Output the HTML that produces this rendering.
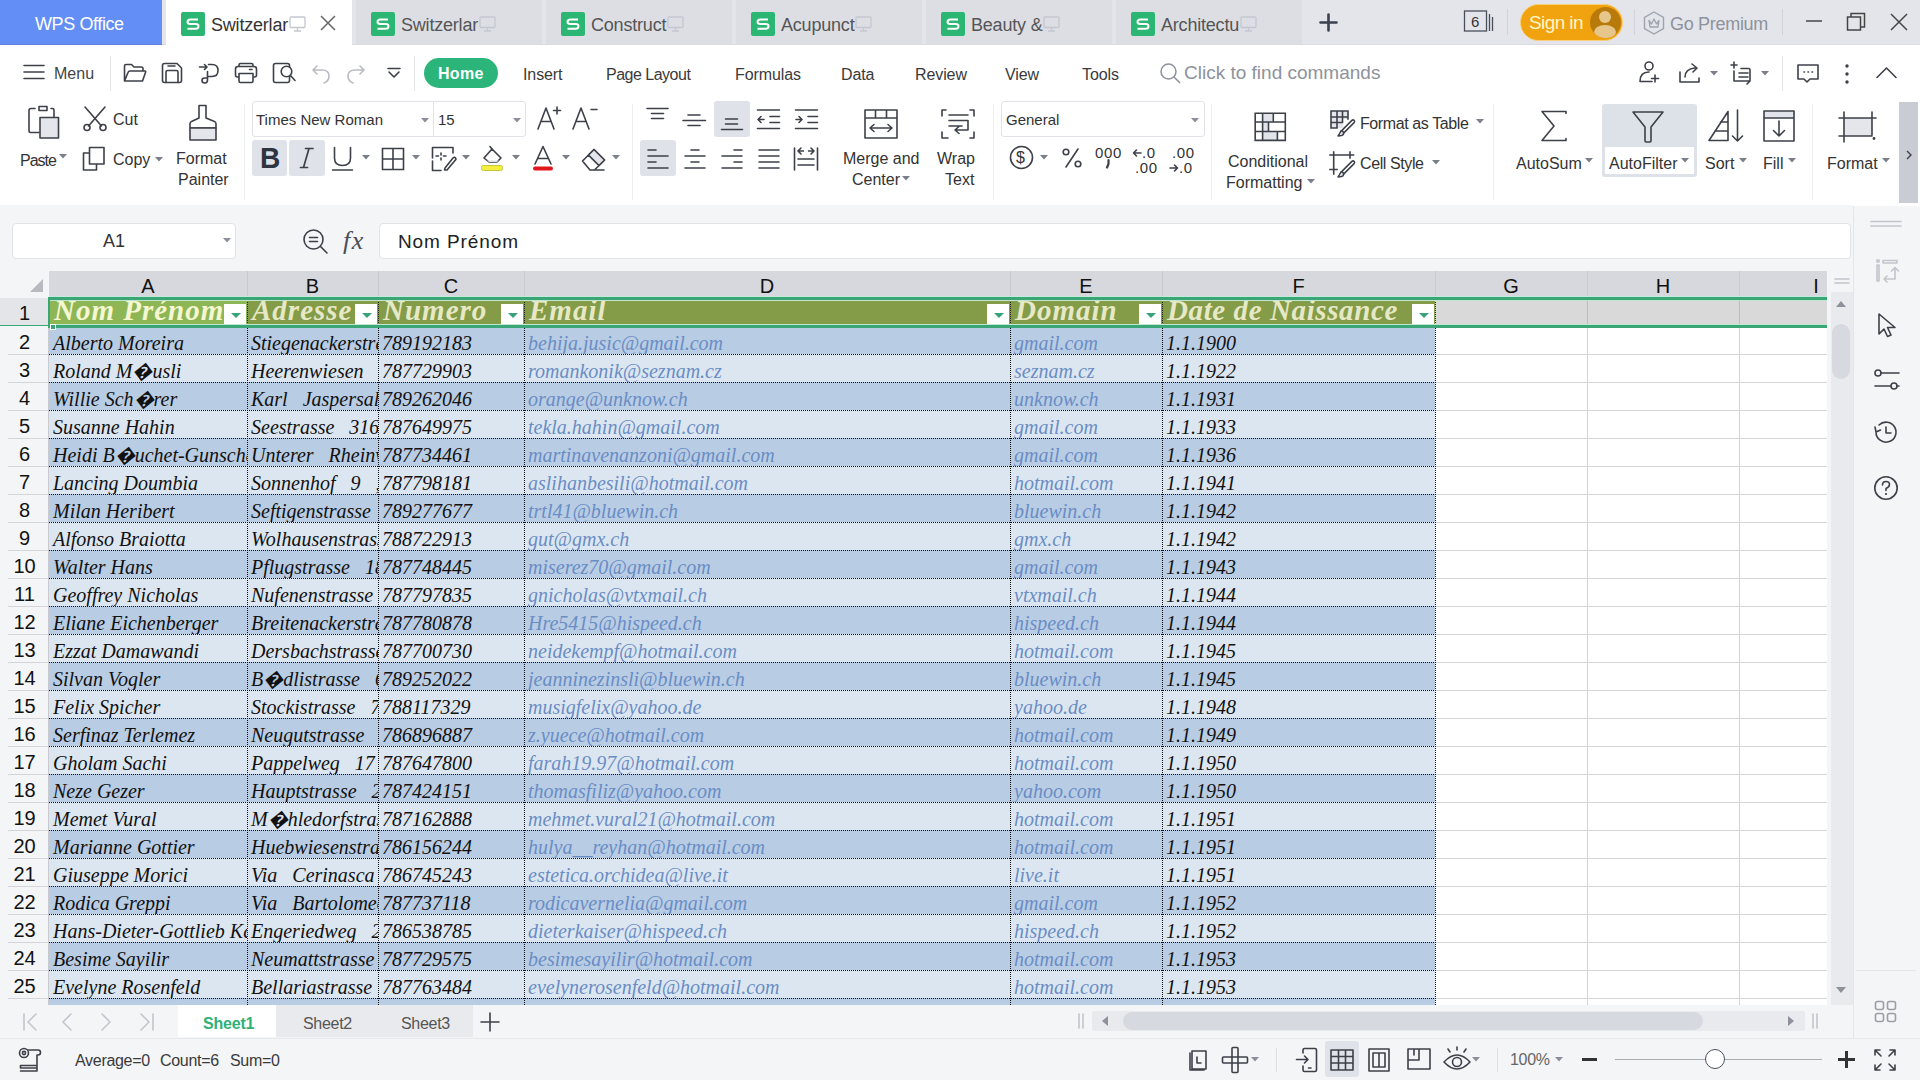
<!DOCTYPE html>
<html><head><meta charset="utf-8"><title>WPS Spreadsheet</title>
<style>
*{margin:0;padding:0;box-sizing:border-box}
html,body{width:1920px;height:1080px;overflow:hidden;background:#fff;font-family:"Liberation Sans",sans-serif;color:#333}
.a{position:absolute}
.t{position:absolute;white-space:nowrap;line-height:1}
svg{position:absolute;overflow:visible}
.ic{fill:none;stroke:#3d4049;stroke-width:1.6;stroke-linecap:round;stroke-linejoin:round}
.cell{position:absolute;overflow:hidden;white-space:nowrap;font-family:"Liberation Serif",serif;font-style:italic}
</style></head><body>

<div class="a" style="left:0;top:0;width:1920px;height:45px;background:#e3e5ea;border-bottom:1px solid #dadce1"></div>
<div class="a" style="left:0;top:0;width:162px;height:45px;background:#628ef6;border-bottom:1px solid #5d82dc"></div>
<div class="t" style="left:35px;top:15px;font-size:18px;color:#fff;letter-spacing:-0.4px">WPS Office</div>
<div class="a" style="left:166px;top:0;width:186px;height:45px;background:#fff"></div>
<div class="a" style="left:181px;top:12px;width:24px;height:24px;background:#2bb673;border-radius:2px"></div>
<svg style="left:181px;top:12px" width="24" height="24" viewBox="0 0 24 24"><path d="M17 7.5H9.5Q6.5 7.5 6.5 10Q6.5 12 9.5 12H14.5Q17.5 12 17.5 14.3Q17.5 16.8 14.5 16.8H6.5" fill="none" stroke="#fff" stroke-width="2"/></svg>
<div class="a" style="left:211px;top:14px;height:22px;display:flex;align-items:flex-start"><span style="font-size:18px;line-height:22px;color:#333;white-space:nowrap;letter-spacing:-0.2px">Switzerlar</span><svg style="position:relative;margin-left:1px;top:2px" width="18" height="17" viewBox="0 0 18 17"><rect x="1" y="1" width="15" height="10.5" rx="1" fill="none" stroke="#c4c7cf" stroke-width="1.3"/><path d="M8.5 11.5v3.5M5 15h7" stroke="#c4c7cf" stroke-width="1.3"/></svg></div>
<div class="a" style="left:356px;top:0;width:186px;height:45px;background:#dcdee4"></div>
<div class="a" style="left:371px;top:12px;width:24px;height:24px;background:#2bb673;border-radius:2px"></div>
<svg style="left:371px;top:12px" width="24" height="24" viewBox="0 0 24 24"><path d="M17 7.5H9.5Q6.5 7.5 6.5 10Q6.5 12 9.5 12H14.5Q17.5 12 17.5 14.3Q17.5 16.8 14.5 16.8H6.5" fill="none" stroke="#fff" stroke-width="2"/></svg>
<div class="a" style="left:401px;top:14px;height:22px;display:flex;align-items:flex-start"><span style="font-size:18px;line-height:22px;color:#555;white-space:nowrap;letter-spacing:-0.2px">Switzerlar</span><svg style="position:relative;margin-left:1px;top:2px" width="18" height="17" viewBox="0 0 18 17"><rect x="1" y="1" width="15" height="10.5" rx="1" fill="none" stroke="#c4c7cf" stroke-width="1.3"/><path d="M8.5 11.5v3.5M5 15h7" stroke="#c4c7cf" stroke-width="1.3"/></svg></div>
<div class="a" style="left:546px;top:0;width:186px;height:45px;background:#dcdee4"></div>
<div class="a" style="left:561px;top:12px;width:24px;height:24px;background:#2bb673;border-radius:2px"></div>
<svg style="left:561px;top:12px" width="24" height="24" viewBox="0 0 24 24"><path d="M17 7.5H9.5Q6.5 7.5 6.5 10Q6.5 12 9.5 12H14.5Q17.5 12 17.5 14.3Q17.5 16.8 14.5 16.8H6.5" fill="none" stroke="#fff" stroke-width="2"/></svg>
<div class="a" style="left:591px;top:14px;height:22px;display:flex;align-items:flex-start"><span style="font-size:18px;line-height:22px;color:#555;white-space:nowrap;letter-spacing:-0.2px">Construct</span><svg style="position:relative;margin-left:1px;top:2px" width="18" height="17" viewBox="0 0 18 17"><rect x="1" y="1" width="15" height="10.5" rx="1" fill="none" stroke="#c4c7cf" stroke-width="1.3"/><path d="M8.5 11.5v3.5M5 15h7" stroke="#c4c7cf" stroke-width="1.3"/></svg></div>
<div class="a" style="left:736px;top:0;width:186px;height:45px;background:#dcdee4"></div>
<div class="a" style="left:751px;top:12px;width:24px;height:24px;background:#2bb673;border-radius:2px"></div>
<svg style="left:751px;top:12px" width="24" height="24" viewBox="0 0 24 24"><path d="M17 7.5H9.5Q6.5 7.5 6.5 10Q6.5 12 9.5 12H14.5Q17.5 12 17.5 14.3Q17.5 16.8 14.5 16.8H6.5" fill="none" stroke="#fff" stroke-width="2"/></svg>
<div class="a" style="left:781px;top:14px;height:22px;display:flex;align-items:flex-start"><span style="font-size:18px;line-height:22px;color:#555;white-space:nowrap;letter-spacing:-0.2px">Acupunct</span><svg style="position:relative;margin-left:1px;top:2px" width="18" height="17" viewBox="0 0 18 17"><rect x="1" y="1" width="15" height="10.5" rx="1" fill="none" stroke="#c4c7cf" stroke-width="1.3"/><path d="M8.5 11.5v3.5M5 15h7" stroke="#c4c7cf" stroke-width="1.3"/></svg></div>
<div class="a" style="left:926px;top:0;width:186px;height:45px;background:#dcdee4"></div>
<div class="a" style="left:941px;top:12px;width:24px;height:24px;background:#2bb673;border-radius:2px"></div>
<svg style="left:941px;top:12px" width="24" height="24" viewBox="0 0 24 24"><path d="M17 7.5H9.5Q6.5 7.5 6.5 10Q6.5 12 9.5 12H14.5Q17.5 12 17.5 14.3Q17.5 16.8 14.5 16.8H6.5" fill="none" stroke="#fff" stroke-width="2"/></svg>
<div class="a" style="left:971px;top:14px;height:22px;display:flex;align-items:flex-start"><span style="font-size:18px;line-height:22px;color:#555;white-space:nowrap;letter-spacing:-0.2px">Beauty &amp;</span><svg style="position:relative;margin-left:1px;top:2px" width="18" height="17" viewBox="0 0 18 17"><rect x="1" y="1" width="15" height="10.5" rx="1" fill="none" stroke="#c4c7cf" stroke-width="1.3"/><path d="M8.5 11.5v3.5M5 15h7" stroke="#c4c7cf" stroke-width="1.3"/></svg></div>
<div class="a" style="left:1116px;top:0;width:186px;height:45px;background:#dcdee4"></div>
<div class="a" style="left:1131px;top:12px;width:24px;height:24px;background:#2bb673;border-radius:2px"></div>
<svg style="left:1131px;top:12px" width="24" height="24" viewBox="0 0 24 24"><path d="M17 7.5H9.5Q6.5 7.5 6.5 10Q6.5 12 9.5 12H14.5Q17.5 12 17.5 14.3Q17.5 16.8 14.5 16.8H6.5" fill="none" stroke="#fff" stroke-width="2"/></svg>
<div class="a" style="left:1161px;top:14px;height:22px;display:flex;align-items:flex-start"><span style="font-size:18px;line-height:22px;color:#555;white-space:nowrap;letter-spacing:-0.2px">Architectu</span><svg style="position:relative;margin-left:1px;top:2px" width="18" height="17" viewBox="0 0 18 17"><rect x="1" y="1" width="15" height="10.5" rx="1" fill="none" stroke="#c4c7cf" stroke-width="1.3"/><path d="M8.5 11.5v3.5M5 15h7" stroke="#c4c7cf" stroke-width="1.3"/></svg></div>
<svg style="left:320px;top:15px" width="16" height="16" viewBox="0 0 16 16"><path d="M1 1L15 15M15 1L1 15" stroke="#666" stroke-width="1.5"/></svg>
<svg style="left:1318px;top:12px" width="21" height="21" viewBox="0 0 21 21"><path d="M10.5 2.5V18.5M2.5 10.5H18.5" stroke="#3a4250" stroke-width="2.6" stroke-linecap="round"/></svg>
<svg style="left:1463px;top:10px" width="34" height="24" viewBox="0 0 34 24"><rect x="1.5" y="1" width="22" height="20" fill="none" stroke="#4a4f5c" stroke-width="1.3"/><path d="M26.5 4v17M29.5 7v14" stroke="#4a4f5c" stroke-width="1.3"/></svg>
<div class="t" style="left:1471px;top:14px;font-size:15px;color:#333">6</div>
<div class="a" style="left:1507px;top:9px;width:1px;height:26px;background:#d0d3d9"></div>
<div class="a" style="left:1520px;top:4px;width:103px;height:37px;background:#f0a20f;border-radius:19px;border:1px solid #f8cf7a"></div>
<div class="t" style="left:1529px;top:13px;font-size:19px;color:#fff6c8;letter-spacing:-0.6px">Sign in</div>
<div class="a" style="left:1590px;top:7px;width:31px;height:31px;background:#b97a0c;border-radius:50%;overflow:hidden"><div class="a" style="left:9px;top:4px;width:12px;height:12px;border-radius:50%;background:#e6c68a"></div><div class="a" style="left:4px;top:18px;width:22px;height:14px;border-radius:50%;background:#e6c68a"></div></div>
<div class="a" style="left:1634px;top:9px;width:1px;height:26px;background:#d0d3d9"></div>
<svg style="left:1643px;top:11px" width="22" height="24" viewBox="0 0 22 24"><path d="M11 1L20.5 6.5V17.5L11 23L1.5 17.5V6.5Z" fill="none" stroke="#9ea3ad" stroke-width="1.4"/><path d="M6 9.5L8.5 13L11 8L13.5 13L16 9.5L15 16H7Z" fill="none" stroke="#9ea3ad" stroke-width="1.3" stroke-linejoin="round"/></svg>
<div class="t" style="left:1670px;top:15px;font-size:18px;color:#8d929c;letter-spacing:-0.3px">Go Premium</div>
<div class="a" style="left:1782px;top:9px;width:1px;height:26px;background:#d0d3d9"></div>
<svg style="left:1805px;top:12px" width="18" height="18" viewBox="0 0 18 18"><path d="M1 9H17" stroke="#444" stroke-width="1.5"/></svg>
<svg style="left:1846px;top:12px" width="20" height="20" viewBox="0 0 20 20"><rect x="1.5" y="5" width="13" height="13" fill="none" stroke="#444" stroke-width="1.5"/><path d="M5 5V1.5H18.5V15H14.5" fill="none" stroke="#444" stroke-width="1.5"/></svg>
<svg style="left:1890px;top:13px" width="18" height="18" viewBox="0 0 18 18"><path d="M1 1L17 17M17 1L1 17" stroke="#444" stroke-width="1.5"/></svg>
<svg style="left:23px;top:64px" width="22" height="16" viewBox="0 0 22 16"><path d="M1 1.5H21M1 8H21M1 14.5H21" stroke="#3d4049" stroke-width="1.6" fill="none" stroke-linecap="round" stroke-linejoin="round"/></svg>
<div class="t" style="left:54px;top:66px;font-size:16px;color:#444">Menu</div>
<div class="a" style="left:110px;top:56px;width:1px;height:35px;background:#e3e5e9"></div>
<svg style="left:123px;top:63px" width="24" height="20" viewBox="0 0 24 20"><path d="M1.5 18V3Q1.5 1.5 3 1.5H8.5L11 4H18.5Q20 4 20 5.5V8M1.5 18L5 9.5Q5.5 8 7 8H22Q23 8 22.5 9.5L19.5 18Z" stroke="#3d4049" stroke-width="1.6" fill="none" stroke-linecap="round" stroke-linejoin="round"/></svg>
<svg style="left:161px;top:62px" width="22" height="22" viewBox="0 0 22 22"><path d="M1.5 3.5Q1.5 1.5 3.5 1.5H16L20.5 6V18.5Q20.5 20.5 18.5 20.5H3.5Q1.5 20.5 1.5 18.5Z M7 4H14 M5 20.5V10Q5 8.5 6.5 8.5H15.5Q17 8.5 17 10V20.5" stroke="#3d4049" stroke-width="1.6" fill="none" stroke-linecap="round" stroke-linejoin="round"/></svg>
<svg style="left:198px;top:62px" width="24" height="24" viewBox="0 0 24 24"><path d="M1.5 5H9M6.5 2.5L9 5L6.5 7.5 M10.5 2.5H14Q20 2.5 20 8.5Q20 14.5 14 14.5H9.5 M9.5 9.5V18Q9.5 21 7 21Q4 21 4 18.5Q4 16 6.5 16H9.5" stroke="#3d4049" stroke-width="1.6" fill="none" stroke-linecap="round" stroke-linejoin="round"/></svg>
<svg style="left:234px;top:62px" width="24" height="22" viewBox="0 0 24 22"><path d="M5 4.5V3Q5 1.5 6.5 1.5H17.5Q19 1.5 19 3V4.5 M4.5 15H3.5Q1.5 15 1.5 13V7Q1.5 4.5 4 4.5H20Q22.5 4.5 22.5 7V13Q22.5 15 20.5 15H19.5 M5 11.5H19V19Q19 20.5 17.5 20.5H6.5Q5 20.5 5 19Z M15.5 7.5H18" stroke="#3d4049" stroke-width="1.6" fill="none" stroke-linecap="round" stroke-linejoin="round"/></svg>
<svg style="left:272px;top:62px" width="26" height="24" viewBox="0 0 26 24"><path d="M1.5 3.5Q1.5 1.5 3.5 1.5H15.5Q17.5 1.5 17.5 3.5V18.5Q17.5 20.5 15.5 20.5H3.5Q1.5 20.5 1.5 18.5Z M18.5 13.5L23 18.5" stroke="#3d4049" stroke-width="1.6" fill="none" stroke-linecap="round" stroke-linejoin="round"/><circle cx="14.5" cy="9.5" r="5.3" fill="#fff" stroke="#3d4049" stroke-width="1.6"/></svg>
<svg style="left:311px;top:63px" width="20" height="22" viewBox="0 0 20 22"><path d="M2 7L6 3M2 7L6 11M2 7H11Q18 7 18 13Q18 18 13 20" stroke="#b9bcc3" stroke-width="1.6" fill="none" stroke-linecap="round" stroke-linejoin="round"/></svg>
<svg style="left:346px;top:63px" width="20" height="22" viewBox="0 0 20 22"><path d="M18 7L14 3M18 7L14 11M18 7H9Q2 7 2 13Q2 18 7 20" stroke="#b9bcc3" stroke-width="1.6" fill="none" stroke-linecap="round" stroke-linejoin="round"/></svg>
<svg style="left:387px;top:67px" width="14" height="12" viewBox="0 0 14 12"><path d="M1 1.5H13M2 5L7 10L12 5" stroke="#3d4049" stroke-width="1.6" fill="none" stroke-linecap="round" stroke-linejoin="round"/></svg>
<div class="a" style="left:414px;top:56px;width:1px;height:35px;background:#e3e5e9"></div>
<div class="a" style="left:424px;top:58px;width:74px;height:30px;background:#2cb57a;border-radius:15px"></div>
<div class="t" style="left:438px;top:66px;font-size:16px;font-weight:bold;color:#fff;letter-spacing:0.3px">Home</div>
<div class="t" style="left:523px;top:67px;font-size:16px;color:#3a3a3a;letter-spacing:-0.1px">Insert</div>
<div class="t" style="left:606px;top:67px;font-size:16px;color:#3a3a3a;letter-spacing:-0.5px">Page Layout</div>
<div class="t" style="left:735px;top:67px;font-size:16px;color:#3a3a3a;letter-spacing:-0.1px">Formulas</div>
<div class="t" style="left:841px;top:67px;font-size:16px;color:#3a3a3a;letter-spacing:-0.1px">Data</div>
<div class="t" style="left:915px;top:67px;font-size:16px;color:#3a3a3a;letter-spacing:-0.1px">Review</div>
<div class="t" style="left:1005px;top:67px;font-size:16px;color:#3a3a3a;letter-spacing:-0.1px">View</div>
<div class="t" style="left:1082px;top:67px;font-size:16px;color:#3a3a3a;letter-spacing:-0.1px">Tools</div>
<svg style="left:1159px;top:62px" width="24" height="24" viewBox="0 0 24 24"><circle cx="9.5" cy="9.5" r="7.5" fill="none" stroke="#8d929c" stroke-width="1.5"/><path d="M15 15L21 21" stroke="#8d929c" stroke-width="1.6"/></svg>
<div class="t" style="left:1184px;top:63px;font-size:19px;color:#8d929c">Click to find commands</div>
<svg style="left:1638px;top:60px" width="24" height="24" viewBox="0 0 24 24"><circle cx="11" cy="6" r="4" stroke="#3d4049" stroke-width="1.6" fill="none" stroke-linecap="round" stroke-linejoin="round"/><path d="M2 21.5Q2 12 11 12 M2 21.5H14 M17 15V22M13.5 18.5H20.5" stroke="#3d4049" stroke-width="1.6" fill="none" stroke-linecap="round" stroke-linejoin="round"/></svg>
<svg style="left:1678px;top:60px" width="26" height="24" viewBox="0 0 26 24"><path d="M2 12V22H21V18 M7 17Q7 9 17 8 M14 4L19 8L15 12" stroke="#3d4049" stroke-width="1.6" fill="none" stroke-linecap="round" stroke-linejoin="round"/></svg>
<svg style="left:1710px;top:71px" width="8" height="5" viewBox="0 0 8 5"><path d="M0 0H8L4 4.5Z" fill="#7a7f8a"/></svg>
<svg style="left:1731px;top:61px" width="26" height="24" viewBox="0 0 26 24"><path d="M3 1V7M0 4H6 M3 10V20H19V9 Q19 7.5 17.5 7.5H10 M8 12H17M8 16H17 M19 20L16 23" stroke="#3d4049" stroke-width="1.6" fill="none" stroke-linecap="round" stroke-linejoin="round"/></svg>
<svg style="left:1761px;top:71px" width="8" height="5" viewBox="0 0 8 5"><path d="M0 0H8L4 4.5Z" fill="#7a7f8a"/></svg>
<div class="a" style="left:1782px;top:56px;width:1px;height:35px;background:#e3e5e9"></div>
<svg style="left:1796px;top:63px" width="24" height="22" viewBox="0 0 24 22"><path d="M2 2H22V16H14L11 19L8 16H2Z M8 9H8.5M12 9H12.5M16 9H16.5" stroke="#3d4049" stroke-width="1.6" fill="none" stroke-linecap="round" stroke-linejoin="round"/></svg>
<svg style="left:1844px;top:63px" width="6" height="22" viewBox="0 0 6 22"><circle cx="3" cy="3" r="1.7" fill="#3d4049"/><circle cx="3" cy="11" r="1.7" fill="#3d4049"/><circle cx="3" cy="19" r="1.7" fill="#3d4049"/></svg>
<svg style="left:1875px;top:66px" width="24" height="14" viewBox="0 0 24 14"><path d="M2 11.5L11.5 2L21 11.5" stroke="#3d4049" stroke-width="1.6" fill="none" stroke-linecap="round" stroke-linejoin="round"/></svg>
<svg style="left:27px;top:104px" width="34" height="36" viewBox="0 0 34 36"><path d="M12 2.5H20V6.5H12Z M8 4.5H4Q2 4.5 2 6.5V27Q2 28.5 3.5 28.5H12 M24 4.5H25.5Q27 4.5 27 6V13" stroke="#3d4049" stroke-width="1.6" fill="none" stroke-linecap="round" stroke-linejoin="round"/><path d="M13 13.5H31.5V34H13Z" fill="#e4e6ec" stroke="#3d4049" stroke-width="1.6" stroke-linejoin="round"/></svg>
<div class="t" style="left:20px;top:153px;font-size:16px;color:#333;letter-spacing:-1px">Paste</div>
<svg style="left:59px;top:154px" width="8" height="5" viewBox="0 0 8 5"><path d="M0 0H8L4 4.5Z" fill="#7a7f8a"/></svg>
<svg style="left:82px;top:106px" width="26" height="26" viewBox="0 0 26 26"><path d="M3 1L19.5 20M23 1L6.5 20" stroke="#3d4049" stroke-width="1.6" fill="none" stroke-linecap="round" stroke-linejoin="round"/><circle cx="5" cy="21.5" r="3" stroke="#3d4049" stroke-width="1.6" fill="none" stroke-linecap="round" stroke-linejoin="round"/><circle cx="21" cy="21.5" r="3" stroke="#3d4049" stroke-width="1.6" fill="none" stroke-linecap="round" stroke-linejoin="round"/></svg>
<div class="t" style="left:113px;top:112px;font-size:16px;color:#333;">Cut</div>
<svg style="left:82px;top:146px" width="26" height="26" viewBox="0 0 26 26"><path d="M7.5 1.5H22V18H7.5Z M7.5 7H1.5V24H14.5V18" stroke="#3d4049" stroke-width="1.6" fill="none" stroke-linecap="round" stroke-linejoin="round"/></svg>
<div class="t" style="left:113px;top:152px;font-size:16px;color:#333;">Copy</div>
<svg style="left:155px;top:157px" width="8" height="5" viewBox="0 0 8 5"><path d="M0 0H8L4 4.5Z" fill="#7a7f8a"/></svg>
<svg style="left:188px;top:104px" width="30" height="38" viewBox="0 0 30 38"><path d="M11 1.5H18V14L26.5 17.5Q28 18 28 20V24H2V20Q2 18 3.5 17.5L11 14Z" stroke="#3d4049" stroke-width="1.6" fill="none" stroke-linecap="round" stroke-linejoin="round"/><path d="M2 24H28V36H2Z" fill="#e4e6ec" stroke="#3d4049" stroke-width="1.6" stroke-linejoin="round"/></svg>
<div class="t" style="left:176px;top:151px;font-size:16px;color:#333;">Format</div>
<div class="t" style="left:178px;top:172px;font-size:16px;color:#333;">Painter</div>
<div class="a" style="left:244px;top:104px;width:1px;height:96px;background:#eceef1"></div>
<div class="a" style="left:252px;top:101px;width:274px;height:36px;border:1px solid #e1e3e8;border-radius:3px;background:#fff"></div>
<div class="a" style="left:433px;top:102px;width:1px;height:34px;background:#e1e3e8"></div>
<div class="t" style="left:256px;top:112px;font-size:15px;color:#333;">Times New Roman</div>
<svg style="left:421px;top:118px" width="8" height="5" viewBox="0 0 8 5"><path d="M0 0H8L4 4.5Z" fill="#8a8f99"/></svg>
<div class="t" style="left:438px;top:112px;font-size:15px;color:#333;">15</div>
<svg style="left:513px;top:118px" width="8" height="5" viewBox="0 0 8 5"><path d="M0 0H8L4 4.5Z" fill="#8a8f99"/></svg>
<svg style="left:537px;top:106px" width="26" height="26" viewBox="0 0 26 26"><path d="M1 23L9 2L17 23 M4 15.5H14 M20 1V8M16.5 4.5H23.5" stroke="#3d4049" stroke-width="1.6" fill="none" stroke-linecap="round" stroke-linejoin="round"/></svg>
<svg style="left:572px;top:106px" width="28" height="26" viewBox="0 0 28 26"><path d="M1 23L9 2L17 23 M4 15.5H14 M19 3.5H25" stroke="#3d4049" stroke-width="1.6" fill="none" stroke-linecap="round" stroke-linejoin="round"/></svg>
<div class="a" style="left:252px;top:140px;width:35px;height:36px;background:#dfe2e8;border-radius:3px"></div>
<div class="a" style="left:289px;top:140px;width:36px;height:36px;background:#dfe2e8;border-radius:3px"></div>
<div class="t" style="left:260px;top:144px;font-size:29px;font-weight:bold;color:#2e3440;transform:scaleX(0.97);transform-origin:left top">B</div>
<svg style="left:298px;top:146px" width="18" height="24" viewBox="0 0 18 24"><path d="M11 2.5L5.5 21.5 M7.5 2.5H15M2.5 21.5H9.5" stroke="#3d4049" stroke-width="1.7" stroke-linecap="round"/></svg>
<svg style="left:331px;top:146px" width="24" height="26" viewBox="0 0 24 26"><path d="M3.5 1.5V12Q3.5 19.5 11.5 19.5Q19.5 19.5 19.5 12V1.5 M1.5 24H21.5" stroke="#3d4049" stroke-width="1.6" fill="none" stroke-linecap="round" stroke-linejoin="round"/></svg>
<svg style="left:362px;top:155px" width="8" height="5" viewBox="0 0 8 5"><path d="M0 0H8L4 4.5Z" fill="#7a7f8a"/></svg>
<svg style="left:381px;top:147px" width="24" height="24" viewBox="0 0 24 24"><path d="M1.5 1.5H22.5V22.5H1.5Z M12 1.5V22.5M1.5 12H22.5" stroke="#3d4049" stroke-width="1.6" fill="none" stroke-linecap="square" stroke-linejoin="miter"/></svg>
<svg style="left:412px;top:155px" width="8" height="5" viewBox="0 0 8 5"><path d="M0 0H8L4 4.5Z" fill="#7a7f8a"/></svg>
<svg style="left:431px;top:146px" width="26" height="26" viewBox="0 0 26 26"><path d="M1.5 12V1.5H22V7 M1.5 15V24.5H10 M5 10H7.5 M10 7V9 M10 12V14 M12.5 10H15 M14 22L22 12Q23.5 10.5 24.5 12Q25.5 13.5 24 14.5L16 24H13.5Z" stroke="#3d4049" stroke-width="1.6" fill="none" stroke-linecap="round" stroke-linejoin="round"/></svg>
<svg style="left:462px;top:155px" width="8" height="5" viewBox="0 0 8 5"><path d="M0 0H8L4 4.5Z" fill="#7a7f8a"/></svg>
<svg style="left:480px;top:145px" width="26" height="28" viewBox="0 0 26 28"><path d="M4 13L12 4L21 13L17 17H9Z" stroke="#3d4049" stroke-width="1.6" fill="none" stroke-linecap="round" stroke-linejoin="round"/><path d="M7 15.5H19L17 17H9Z" fill="#dcdde2"/><path d="M12 4L10 1.5" stroke="#3d4049" stroke-width="1.6" fill="none" stroke-linecap="round" stroke-linejoin="round"/><rect x="1.5" y="20.5" width="21" height="5" rx="2" fill="#f3ef3c" stroke="#c9c43a" stroke-width="1"/></svg>
<svg style="left:512px;top:155px" width="8" height="5" viewBox="0 0 8 5"><path d="M0 0H8L4 4.5Z" fill="#7a7f8a"/></svg>
<svg style="left:532px;top:145px" width="24" height="28" viewBox="0 0 24 28"><path d="M3 19L11 1.5L19 19 M5.5 13.5H16.5" stroke="#3d4049" stroke-width="1.6" fill="none" stroke-linecap="round" stroke-linejoin="round"/><rect x="1" y="21.5" width="20" height="4" rx="2" fill="#e0161d"/></svg>
<svg style="left:562px;top:155px" width="8" height="5" viewBox="0 0 8 5"><path d="M0 0H8L4 4.5Z" fill="#7a7f8a"/></svg>
<svg style="left:581px;top:146px" width="28" height="26" viewBox="0 0 28 26"><path d="M1.5 15L13 3.5L23.5 14L13.5 24H9Z M7.5 9L18 19.5 M10 24H23" stroke="#3d4049" stroke-width="1.6" fill="none" stroke-linecap="round" stroke-linejoin="round"/><path d="M13 3.5L23.5 14L18 19.5L7.5 9Z" fill="#e4e6ec" stroke="#3d4049" stroke-width="1.6" stroke-linejoin="round"/></svg>
<svg style="left:612px;top:155px" width="8" height="5" viewBox="0 0 8 5"><path d="M0 0H8L4 4.5Z" fill="#7a7f8a"/></svg>
<div class="a" style="left:632px;top:104px;width:1px;height:96px;background:#eceef1"></div>
<div class="a" style="left:714px;top:101px;width:36px;height:36px;background:#dfe2e8;border-radius:3px"></div>
<div class="a" style="left:640px;top:140px;width:36px;height:36px;background:#dfe2e8;border-radius:3px"></div>
<svg style="left:646px;top:107px" width="24" height="14" viewBox="0 0 24 14"><path d="M1 1.5H22M5.5 6.5H17.5M5.5 11.5H17.5" stroke="#3d4049" stroke-width="1.6" fill="none" stroke-linecap="round" stroke-linejoin="round"/></svg>
<svg style="left:682px;top:113px" width="26" height="16" viewBox="0 0 26 16"><path d="M6 2H18M1 7.5H23.5M6 12.5H18" stroke="#3d4049" stroke-width="1.6" fill="none" stroke-linecap="round" stroke-linejoin="round"/></svg>
<svg style="left:720px;top:116px" width="24" height="16" viewBox="0 0 24 16"><path d="M5.5 3H17.5M5.5 8H17.5M1.5 13.5H22.5" stroke="#3d4049" stroke-width="1.6" fill="none" stroke-linecap="round" stroke-linejoin="round"/></svg>
<svg style="left:756px;top:108px" width="26" height="24" viewBox="0 0 26 24"><path d="M1.5 2H23.5M14 8.5H23.5M14 14.5H23.5M1.5 20.5H23.5 M8 11.5H2M5 8.5L2 11.5L5 14.5" stroke="#3d4049" stroke-width="1.6" fill="none" stroke-linecap="round" stroke-linejoin="round"/></svg>
<svg style="left:794px;top:108px" width="26" height="24" viewBox="0 0 26 24"><path d="M1.5 2H23.5M14 8.5H23.5M14 14.5H23.5M1.5 20.5H23.5 M2 11.5H8M5 8.5L8 11.5L5 14.5" stroke="#3d4049" stroke-width="1.6" fill="none" stroke-linecap="round" stroke-linejoin="round"/></svg>
<svg style="left:646px;top:147px" width="24" height="24" viewBox="0 0 24 24"><path d="M2 3H10M2 9H22M2 15H10M2 21H22" stroke="#3d4049" stroke-width="1.6" fill="none" stroke-linecap="round" stroke-linejoin="round"/></svg>
<svg style="left:683px;top:147px" width="24" height="24" viewBox="0 0 24 24"><path d="M8 3H16M2 9H22M8 15H16M2 21H22" stroke="#3d4049" stroke-width="1.6" fill="none" stroke-linecap="round" stroke-linejoin="round"/></svg>
<svg style="left:720px;top:147px" width="24" height="24" viewBox="0 0 24 24"><path d="M14 3H22M2 9H22M14 15H22M2 21H22" stroke="#3d4049" stroke-width="1.6" fill="none" stroke-linecap="round" stroke-linejoin="round"/></svg>
<svg style="left:757px;top:147px" width="24" height="24" viewBox="0 0 24 24"><path d="M2 3H22M2 9H22M2 15H22M2 21H22" stroke="#3d4049" stroke-width="1.6" fill="none" stroke-linecap="round" stroke-linejoin="round"/></svg>
<svg style="left:793px;top:146px" width="26" height="26" viewBox="0 0 26 26"><path d="M1.5 2V24M24.5 2V24 M5 13H21M5 19H21 M5 5H21 M5 5L8 2M5 5L8 8M21 5L18 2M21 5L18 8" stroke="#3d4049" stroke-width="1.6" fill="none" stroke-linecap="round" stroke-linejoin="round"/><path d="M11 5H15" stroke="#fff" stroke-width="3"/></svg>
<svg style="left:863px;top:108px" width="36" height="32" viewBox="0 0 36 32"><path d="M2 2H34V30H2Z M2 10H34 M12.5 2V10M23.5 2V10 M7 20H29 M7 20L11 16.5M7 20L11 23.5M29 20L25 16.5M29 20L25 23.5" stroke="#3d4049" stroke-width="1.6" fill="none" stroke-linecap="round" stroke-linejoin="round"/></svg>
<div class="t" style="left:843px;top:151px;font-size:16px;color:#333;">Merge and</div>
<div class="t" style="left:852px;top:172px;font-size:16px;color:#333;">Center</div>
<svg style="left:902px;top:176px" width="8" height="5" viewBox="0 0 8 5"><path d="M0 0H8L4 4.5Z" fill="#7a7f8a"/></svg>
<svg style="left:940px;top:108px" width="36" height="32" viewBox="0 0 36 32"><path d="M6 2H2V8 M30 2H34V8 M2 24V30H8 M34 24V30H30 M9 7H28M9 12.5H28M9 18H22 M28 12.5V22H15 M15 22L19 18.5M15 22L19 25.5" stroke="#3d4049" stroke-width="1.6" fill="none" stroke-linecap="round" stroke-linejoin="round"/></svg>
<div class="t" style="left:937px;top:151px;font-size:16px;color:#333;">Wrap</div>
<div class="t" style="left:945px;top:172px;font-size:16px;color:#333;">Text</div>
<div class="a" style="left:993px;top:104px;width:1px;height:96px;background:#eceef1"></div>
<div class="a" style="left:1001px;top:101px;width:204px;height:36px;border:1px solid #e1e3e8;border-radius:3px;background:#fff"></div>
<div class="t" style="left:1006px;top:112px;font-size:15px;color:#333;">General</div>
<svg style="left:1191px;top:118px" width="8" height="5" viewBox="0 0 8 5"><path d="M0 0H8L4 4.5Z" fill="#8a8f99"/></svg>
<svg style="left:1009px;top:145px" width="26" height="26" viewBox="0 0 26 26"><circle cx="12.5" cy="12.5" r="11" stroke="#3d4049" stroke-width="1.6" fill="none" stroke-linecap="round" stroke-linejoin="round"/></svg>
<div class="t" style="left:1016px;top:150px;font-size:16px;color:#333;">$</div>
<svg style="left:1040px;top:155px" width="8" height="5" viewBox="0 0 8 5"><path d="M0 0H8L4 4.5Z" fill="#7a7f8a"/></svg>
<svg style="left:1061px;top:147px" width="22" height="22" viewBox="0 0 22 22"><path d="M17 2L5 20" stroke="#3d4049" stroke-width="1.6" fill="none" stroke-linecap="round" stroke-linejoin="round"/><circle cx="5" cy="5" r="2.8" stroke="#3d4049" stroke-width="1.6" fill="none" stroke-linecap="round" stroke-linejoin="round"/><circle cx="17" cy="17" r="2.8" stroke="#3d4049" stroke-width="1.6" fill="none" stroke-linecap="round" stroke-linejoin="round"/></svg>
<div class="t" style="left:1095px;top:145px;font-size:15px;color:#333;letter-spacing:0.6px">000</div>
<svg style="left:1105px;top:159px" width="6" height="10" viewBox="0 0 6 10"><path d="M3.5 1V5L2 8.5" stroke="#3d4049" stroke-width="2.2" stroke-linecap="round" fill="none"/></svg>
<svg style="left:1132px;top:148px" width="10" height="10" viewBox="0 0 10 10"><path d="M9 5H1.5M4.5 2L1.5 5L4.5 8" stroke="#3d4049" stroke-width="1.6" fill="none" stroke-linecap="round" stroke-linejoin="round" stroke-width="1.4"/></svg>
<div class="t" style="left:1142px;top:145px;font-size:15px;color:#333;letter-spacing:0.6px">.0</div>
<div class="t" style="left:1135px;top:160px;font-size:15px;color:#333;letter-spacing:0.6px">.00</div>
<div class="t" style="left:1172px;top:145px;font-size:15px;color:#333;letter-spacing:0.6px">.00</div>
<svg style="left:1169px;top:163px" width="10" height="10" viewBox="0 0 10 10"><path d="M1 5H8.5M5.5 2L8.5 5L5.5 8" stroke="#3d4049" stroke-width="1.6" fill="none" stroke-linecap="round" stroke-linejoin="round" stroke-width="1.4"/></svg>
<div class="t" style="left:1179px;top:160px;font-size:15px;color:#333;letter-spacing:0.6px">.0</div>
<div class="a" style="left:1211px;top:104px;width:1px;height:96px;background:#eceef1"></div>
<svg style="left:1253px;top:111px" width="34" height="32" viewBox="0 0 34 32"><path d="M9.6 2.5H20.3V11H9.6Z" fill="#e1e4ea"/><path d="M9.6 11H15.5V20.5H9.6Z" fill="#e1e4ea"/><path d="M9.6 20.5H24.4V29.4H9.6Z" fill="#e1e4ea"/><path d="M2.2 2.2H32.3V29.4H2.2Z M2.2 11H32.3M2.2 20.5H32.3 M9.6 2.2V29.4 M20.3 2.2V11 M15.5 11V20.5 M24.4 20.5V29.4" stroke="#3d4049" stroke-width="1.6" fill="none" stroke-linecap="square" stroke-linejoin="miter"/></svg>
<div class="t" style="left:1228px;top:154px;font-size:16px;color:#333;">Conditional</div>
<div class="t" style="left:1226px;top:175px;font-size:16px;color:#333;">Formatting</div>
<svg style="left:1307px;top:179px" width="8" height="5" viewBox="0 0 8 5"><path d="M0 0H8L4 4.5Z" fill="#7a7f8a"/></svg>
<svg style="left:1329px;top:109px" width="28" height="28" viewBox="0 0 28 28"><path d="M2 2H19V10H14V19H2Z" fill="#e4e6ec"/><path d="M2 2H19V10 M2 2V19H8 M2 8H19 M2 13.5H13 M8 2V19 M13.5 2V13.5" stroke="#3d4049" stroke-width="1.6" fill="none" stroke-linecap="square" stroke-linejoin="miter"/><path d="M24 12.5L13 23.5" stroke="#3d4049" stroke-width="4.6" stroke-linecap="round"/><path d="M24 12.5L13 23.5" stroke="#fff" stroke-width="1.6" stroke-linecap="round"/><path d="M10 25.5L9 27L12.5 26.5Q15 26 14.5 23.5Q14 21.5 12 22Z" fill="#e1e4ea" stroke="#3d4049" stroke-width="1.5" stroke-linejoin="round"/></svg>
<div class="t" style="left:1360px;top:116px;font-size:16px;color:#333;letter-spacing:-0.4px">Format as Table</div>
<svg style="left:1476px;top:119px" width="8" height="5" viewBox="0 0 8 5"><path d="M0 0H8L4 4.5Z" fill="#7a7f8a"/></svg>
<svg style="left:1329px;top:150px" width="28" height="28" viewBox="0 0 28 28"><path d="M4.7 2V24 M1 5H24.5 M21 2V8 M1 19.5H8" stroke="#3d4049" stroke-width="1.6" fill="none" stroke-linecap="square" stroke-linejoin="miter"/><path d="M24 12.5L13 23.5" stroke="#3d4049" stroke-width="4.6" stroke-linecap="round"/><path d="M24 12.5L13 23.5" stroke="#fff" stroke-width="1.6" stroke-linecap="round"/><path d="M10 25.5L9 27L12.5 26.5Q15 26 14.5 23.5Q14 21.5 12 22Z" fill="#e1e4ea" stroke="#3d4049" stroke-width="1.5" stroke-linejoin="round"/></svg>
<div class="t" style="left:1360px;top:156px;font-size:16px;color:#333;letter-spacing:-0.4px">Cell Style</div>
<svg style="left:1432px;top:160px" width="8" height="5" viewBox="0 0 8 5"><path d="M0 0H8L4 4.5Z" fill="#7a7f8a"/></svg>
<div class="a" style="left:1493px;top:104px;width:1px;height:96px;background:#eceef1"></div>
<svg style="left:1540px;top:110px" width="28" height="32" viewBox="0 0 28 32"><path d="M26 3.5V1.5H2L14 16L2 30.5H26V28.5" stroke="#3d4049" stroke-width="1.6" fill="none" stroke-linecap="round" stroke-linejoin="round"/></svg>
<div class="t" style="left:1516px;top:156px;font-size:16px;color:#333;">AutoSum</div>
<svg style="left:1585px;top:158px" width="8" height="5" viewBox="0 0 8 5"><path d="M0 0H8L4 4.5Z" fill="#7a7f8a"/></svg>
<div class="a" style="left:1602px;top:104px;width:95px;height:73px;background:#dde1e8;border-radius:3px"></div>
<div class="a" style="left:1605px;top:147px;width:89px;height:27px;background:#fff"></div>
<svg style="left:1631px;top:110px" width="34" height="34" viewBox="0 0 34 34"><path d="M2 2H32L20 17V31Q20 32 19 32H15Q14 32 14 31V17Z" stroke="#3d4049" stroke-width="1.6" fill="none" stroke-linecap="round" stroke-linejoin="round"/></svg>
<div class="t" style="left:1609px;top:156px;font-size:16px;color:#333;">AutoFilter</div>
<svg style="left:1681px;top:158px" width="8" height="5" viewBox="0 0 8 5"><path d="M0 0H8L4 4.5Z" fill="#7a7f8a"/></svg>
<svg style="left:1707px;top:108px" width="38" height="36" viewBox="0 0 38 36"><path d="M2 32.5L21 3.5V32.5Z M13.5 14H21M8 23H21 M30.5 2V33M25.5 28L30.5 33L35.5 28" stroke="#3d4049" stroke-width="1.6" fill="none" stroke-linecap="round" stroke-linejoin="round"/></svg>
<div class="t" style="left:1705px;top:156px;font-size:16px;color:#333;">Sort</div>
<svg style="left:1739px;top:158px" width="8" height="5" viewBox="0 0 8 5"><path d="M0 0H8L4 4.5Z" fill="#7a7f8a"/></svg>
<svg style="left:1762px;top:109px" width="34" height="34" viewBox="0 0 34 34"><path d="M2 2H32V9H2Z" fill="#e1e4ea"/><path d="M2 2H32V32H2Z M2 9H32 M17 12V27M11.5 21.5L17 27L22.5 21.5" stroke="#3d4049" stroke-width="1.6" fill="none" stroke-linecap="round" stroke-linejoin="round"/></svg>
<div class="t" style="left:1763px;top:156px;font-size:16px;color:#333;">Fill</div>
<svg style="left:1788px;top:158px" width="8" height="5" viewBox="0 0 8 5"><path d="M0 0H8L4 4.5Z" fill="#7a7f8a"/></svg>
<div class="a" style="left:1812px;top:104px;width:1px;height:96px;background:#eceef1"></div>
<svg style="left:1838px;top:110px" width="40" height="34" viewBox="0 0 40 34"><path d="M6 8H34V26H6Z" fill="#e4e6ec"/><path d="M1 8H38 M1 26H34 M6 2V32 M34 2V25" stroke="#3d4049" stroke-width="1.6" fill="none" stroke-linecap="round" stroke-linejoin="round"/><circle cx="36" cy="28.5" r="1.4" fill="#3d4049"/></svg>
<div class="t" style="left:1827px;top:156px;font-size:16px;color:#333;">Format</div>
<svg style="left:1882px;top:158px" width="8" height="5" viewBox="0 0 8 5"><path d="M0 0H8L4 4.5Z" fill="#7a7f8a"/></svg>
<div class="a" style="left:1899px;top:102px;width:19px;height:101px;background:#c9ccd2"></div>
<svg style="left:1905px;top:149px" width="8" height="12" viewBox="0 0 8 12"><path d="M2 2L6 6L2 10" stroke="#3d4049" stroke-width="1.4" fill="none"/></svg>
<div class="a" style="left:0;top:205px;width:1853px;height:5px;background:linear-gradient(#e4e5e8,#f4f5f7)"></div>
<div class="a" style="left:0;top:205px;width:1853px;height:66px;background:#f4f5f7"></div>
<div class="a" style="left:12px;top:223px;width:224px;height:36px;border:1px solid #e1e3e8;border-radius:4px;background:#fff"></div>
<div class="t" style="left:103px;top:232px;font-size:18px;color:#333">A1</div>
<svg style="left:223px;top:238px" width="8" height="5" viewBox="0 0 8 5"><path d="M0 0H8L4 4.5Z" fill="#8a8f99"/></svg>
<svg style="left:302px;top:228px" width="28" height="28" viewBox="0 0 28 28"><circle cx="11.5" cy="11.5" r="9.5" fill="none" stroke="#3d4049" stroke-width="1.6"/><path d="M18.5 18.5L25 25 M7.5 9.5H15.5M7.5 13.5H15.5" stroke="#3d4049" stroke-width="1.6" stroke-linecap="round"/></svg>
<div class="t" style="left:343px;top:228px;font-size:26px;letter-spacing:1.5px;font-family:'Liberation Serif',serif;font-style:italic;color:#4a4e57">fx</div>
<div class="a" style="left:379px;top:223px;width:1472px;height:36px;border:1px solid #e1e3e8;border-radius:4px;background:#fff"></div>
<div class="t" style="left:398px;top:232px;font-size:19px;letter-spacing:0.9px;color:#222">Nom Prénom</div>
<div class="a" style="left:0;top:271px;width:49px;height:26px;background:#f4f5f7"></div>
<svg style="left:29px;top:278px" width="15" height="15" viewBox="0 0 15 15"><path d="M14 1V14H1Z" fill="#b7bac1"/></svg>
<div class="a" style="left:49px;top:271px;width:1778px;height:26px;background:#d6d8de"></div>
<div class="t" style="left:108.0px;width:80px;text-align:center;top:276px;font-size:20px;color:#111">A</div>
<div class="a" style="left:247px;top:271px;width:1px;height:26px;background:#c8cad0"></div>
<div class="t" style="left:272.5px;width:80px;text-align:center;top:276px;font-size:20px;color:#111">B</div>
<div class="a" style="left:378px;top:271px;width:1px;height:26px;background:#c8cad0"></div>
<div class="t" style="left:411.0px;width:80px;text-align:center;top:276px;font-size:20px;color:#111">C</div>
<div class="a" style="left:524px;top:271px;width:1px;height:26px;background:#c8cad0"></div>
<div class="t" style="left:727.0px;width:80px;text-align:center;top:276px;font-size:20px;color:#111">D</div>
<div class="a" style="left:1010px;top:271px;width:1px;height:26px;background:#c8cad0"></div>
<div class="t" style="left:1046.0px;width:80px;text-align:center;top:276px;font-size:20px;color:#111">E</div>
<div class="a" style="left:1162px;top:271px;width:1px;height:26px;background:#c8cad0"></div>
<div class="t" style="left:1258.5px;width:80px;text-align:center;top:276px;font-size:20px;color:#111">F</div>
<div class="a" style="left:1435px;top:271px;width:1px;height:26px;background:#c8cad0"></div>
<div class="t" style="left:1471.0px;width:80px;text-align:center;top:276px;font-size:20px;color:#111">G</div>
<div class="a" style="left:1587px;top:271px;width:1px;height:26px;background:#c8cad0"></div>
<div class="t" style="left:1623.0px;width:80px;text-align:center;top:276px;font-size:20px;color:#111">H</div>
<div class="a" style="left:1739px;top:271px;width:1px;height:26px;background:#c8cad0"></div>
<div class="t" style="left:1776px;width:80px;text-align:center;top:276px;font-size:20px;color:#111">I</div>
<div class="a" style="left:0;top:297px;width:49px;height:708px;background:#f4f5f7"></div>
<div class="a" style="left:0;top:298px;width:49px;height:28px;background:#e4e5e9"></div>
<div class="a" style="left:48px;top:297px;width:1px;height:708px;background:#c8cad0"></div>
<div class="a" style="left:49px;top:297px;width:1778px;height:708px;background:#fff"></div>
<div class="a" style="left:1435px;top:354px;width:392px;height:1px;background:#d4d4d4"></div>
<div class="a" style="left:1435px;top:382px;width:392px;height:1px;background:#d4d4d4"></div>
<div class="a" style="left:1435px;top:410px;width:392px;height:1px;background:#d4d4d4"></div>
<div class="a" style="left:1435px;top:438px;width:392px;height:1px;background:#d4d4d4"></div>
<div class="a" style="left:1435px;top:466px;width:392px;height:1px;background:#d4d4d4"></div>
<div class="a" style="left:1435px;top:494px;width:392px;height:1px;background:#d4d4d4"></div>
<div class="a" style="left:1435px;top:522px;width:392px;height:1px;background:#d4d4d4"></div>
<div class="a" style="left:1435px;top:550px;width:392px;height:1px;background:#d4d4d4"></div>
<div class="a" style="left:1435px;top:578px;width:392px;height:1px;background:#d4d4d4"></div>
<div class="a" style="left:1435px;top:606px;width:392px;height:1px;background:#d4d4d4"></div>
<div class="a" style="left:1435px;top:634px;width:392px;height:1px;background:#d4d4d4"></div>
<div class="a" style="left:1435px;top:662px;width:392px;height:1px;background:#d4d4d4"></div>
<div class="a" style="left:1435px;top:690px;width:392px;height:1px;background:#d4d4d4"></div>
<div class="a" style="left:1435px;top:718px;width:392px;height:1px;background:#d4d4d4"></div>
<div class="a" style="left:1435px;top:746px;width:392px;height:1px;background:#d4d4d4"></div>
<div class="a" style="left:1435px;top:774px;width:392px;height:1px;background:#d4d4d4"></div>
<div class="a" style="left:1435px;top:802px;width:392px;height:1px;background:#d4d4d4"></div>
<div class="a" style="left:1435px;top:830px;width:392px;height:1px;background:#d4d4d4"></div>
<div class="a" style="left:1435px;top:858px;width:392px;height:1px;background:#d4d4d4"></div>
<div class="a" style="left:1435px;top:886px;width:392px;height:1px;background:#d4d4d4"></div>
<div class="a" style="left:1435px;top:914px;width:392px;height:1px;background:#d4d4d4"></div>
<div class="a" style="left:1435px;top:942px;width:392px;height:1px;background:#d4d4d4"></div>
<div class="a" style="left:1435px;top:970px;width:392px;height:1px;background:#d4d4d4"></div>
<div class="a" style="left:1435px;top:998px;width:392px;height:1px;background:#d4d4d4"></div>
<div class="a" style="left:1435px;top:1026px;width:392px;height:1px;background:#d4d4d4"></div>
<div class="a" style="left:1587px;top:297px;width:1px;height:708px;background:#d4d4d4"></div>
<div class="a" style="left:1739px;top:297px;width:1px;height:708px;background:#d4d4d4"></div>
<div class="t" style="left:0;width:49px;text-align:center;top:303px;font-size:20px;color:#111">1</div>
<div class="a" style="left:8px;top:354px;width:40px;height:1px;background:#d3d5d9"></div>
<div class="t" style="left:0;width:49px;text-align:center;top:332px;font-size:20px;color:#111">2</div>
<div class="a" style="left:8px;top:382px;width:40px;height:1px;background:#d3d5d9"></div>
<div class="t" style="left:0;width:49px;text-align:center;top:360px;font-size:20px;color:#111">3</div>
<div class="a" style="left:8px;top:410px;width:40px;height:1px;background:#d3d5d9"></div>
<div class="t" style="left:0;width:49px;text-align:center;top:388px;font-size:20px;color:#111">4</div>
<div class="a" style="left:8px;top:438px;width:40px;height:1px;background:#d3d5d9"></div>
<div class="t" style="left:0;width:49px;text-align:center;top:416px;font-size:20px;color:#111">5</div>
<div class="a" style="left:8px;top:466px;width:40px;height:1px;background:#d3d5d9"></div>
<div class="t" style="left:0;width:49px;text-align:center;top:444px;font-size:20px;color:#111">6</div>
<div class="a" style="left:8px;top:494px;width:40px;height:1px;background:#d3d5d9"></div>
<div class="t" style="left:0;width:49px;text-align:center;top:472px;font-size:20px;color:#111">7</div>
<div class="a" style="left:8px;top:522px;width:40px;height:1px;background:#d3d5d9"></div>
<div class="t" style="left:0;width:49px;text-align:center;top:500px;font-size:20px;color:#111">8</div>
<div class="a" style="left:8px;top:550px;width:40px;height:1px;background:#d3d5d9"></div>
<div class="t" style="left:0;width:49px;text-align:center;top:528px;font-size:20px;color:#111">9</div>
<div class="a" style="left:8px;top:578px;width:40px;height:1px;background:#d3d5d9"></div>
<div class="t" style="left:0;width:49px;text-align:center;top:556px;font-size:20px;color:#111">10</div>
<div class="a" style="left:8px;top:606px;width:40px;height:1px;background:#d3d5d9"></div>
<div class="t" style="left:0;width:49px;text-align:center;top:584px;font-size:20px;color:#111">11</div>
<div class="a" style="left:8px;top:634px;width:40px;height:1px;background:#d3d5d9"></div>
<div class="t" style="left:0;width:49px;text-align:center;top:612px;font-size:20px;color:#111">12</div>
<div class="a" style="left:8px;top:662px;width:40px;height:1px;background:#d3d5d9"></div>
<div class="t" style="left:0;width:49px;text-align:center;top:640px;font-size:20px;color:#111">13</div>
<div class="a" style="left:8px;top:690px;width:40px;height:1px;background:#d3d5d9"></div>
<div class="t" style="left:0;width:49px;text-align:center;top:668px;font-size:20px;color:#111">14</div>
<div class="a" style="left:8px;top:718px;width:40px;height:1px;background:#d3d5d9"></div>
<div class="t" style="left:0;width:49px;text-align:center;top:696px;font-size:20px;color:#111">15</div>
<div class="a" style="left:8px;top:746px;width:40px;height:1px;background:#d3d5d9"></div>
<div class="t" style="left:0;width:49px;text-align:center;top:724px;font-size:20px;color:#111">16</div>
<div class="a" style="left:8px;top:774px;width:40px;height:1px;background:#d3d5d9"></div>
<div class="t" style="left:0;width:49px;text-align:center;top:752px;font-size:20px;color:#111">17</div>
<div class="a" style="left:8px;top:802px;width:40px;height:1px;background:#d3d5d9"></div>
<div class="t" style="left:0;width:49px;text-align:center;top:780px;font-size:20px;color:#111">18</div>
<div class="a" style="left:8px;top:830px;width:40px;height:1px;background:#d3d5d9"></div>
<div class="t" style="left:0;width:49px;text-align:center;top:808px;font-size:20px;color:#111">19</div>
<div class="a" style="left:8px;top:858px;width:40px;height:1px;background:#d3d5d9"></div>
<div class="t" style="left:0;width:49px;text-align:center;top:836px;font-size:20px;color:#111">20</div>
<div class="a" style="left:8px;top:886px;width:40px;height:1px;background:#d3d5d9"></div>
<div class="t" style="left:0;width:49px;text-align:center;top:864px;font-size:20px;color:#111">21</div>
<div class="a" style="left:8px;top:914px;width:40px;height:1px;background:#d3d5d9"></div>
<div class="t" style="left:0;width:49px;text-align:center;top:892px;font-size:20px;color:#111">22</div>
<div class="a" style="left:8px;top:942px;width:40px;height:1px;background:#d3d5d9"></div>
<div class="t" style="left:0;width:49px;text-align:center;top:920px;font-size:20px;color:#111">23</div>
<div class="a" style="left:8px;top:970px;width:40px;height:1px;background:#d3d5d9"></div>
<div class="t" style="left:0;width:49px;text-align:center;top:948px;font-size:20px;color:#111">24</div>
<div class="a" style="left:8px;top:998px;width:40px;height:1px;background:#d3d5d9"></div>
<div class="t" style="left:0;width:49px;text-align:center;top:976px;font-size:20px;color:#111">25</div>
<div class="a" style="left:8px;top:1026px;width:40px;height:1px;background:#d3d5d9"></div>
<div class="a" style="left:49px;top:326px;width:1386px;height:28px;background:#b8cce4"></div>
<div class="cell" style="left:50px;top:326px;width:197px;height:28px;line-height:34px;padding-left:3px;font-size:20px;color:#111">Alberto Moreira</div>
<div class="cell" style="left:248px;top:326px;width:130px;height:28px;line-height:34px;padding-left:3px;font-size:20px;color:#111">Stiegenackerstrasse</div>
<div class="cell" style="left:379px;top:326px;width:145px;height:28px;line-height:34px;padding-left:3px;font-size:20px;color:#111">789192183</div>
<div class="cell" style="left:525px;top:326px;width:485px;height:28px;line-height:34px;padding-left:3px;font-size:20px;color:#6a8dc4">behija.jusic@gmail.com</div>
<div class="cell" style="left:1011px;top:326px;width:151px;height:28px;line-height:34px;padding-left:3px;font-size:20px;color:#6a8dc4">gmail.com</div>
<div class="cell" style="left:1163px;top:326px;width:272px;height:28px;line-height:34px;padding-left:3px;font-size:20px;color:#111">1.1.1900</div>
<div class="a" style="left:49px;top:354px;width:1386px;height:28px;background:#dce6f1"></div>
<div class="cell" style="left:50px;top:354px;width:197px;height:28px;line-height:34px;padding-left:3px;font-size:20px;color:#111">Roland M�usli</div>
<div class="cell" style="left:248px;top:354px;width:130px;height:28px;line-height:34px;padding-left:3px;font-size:20px;color:#111">Heerenwiesen</div>
<div class="cell" style="left:379px;top:354px;width:145px;height:28px;line-height:34px;padding-left:3px;font-size:20px;color:#111">787729903</div>
<div class="cell" style="left:525px;top:354px;width:485px;height:28px;line-height:34px;padding-left:3px;font-size:20px;color:#6a8dc4">romankonik@seznam.cz</div>
<div class="cell" style="left:1011px;top:354px;width:151px;height:28px;line-height:34px;padding-left:3px;font-size:20px;color:#6a8dc4">seznam.cz</div>
<div class="cell" style="left:1163px;top:354px;width:272px;height:28px;line-height:34px;padding-left:3px;font-size:20px;color:#111">1.1.1922</div>
<div class="a" style="left:49px;top:382px;width:1386px;height:28px;background:#b8cce4"></div>
<div class="cell" style="left:50px;top:382px;width:197px;height:28px;line-height:34px;padding-left:3px;font-size:20px;color:#111">Willie Sch�rer</div>
<div class="cell" style="left:248px;top:382px;width:130px;height:28px;line-height:34px;padding-left:3px;font-size:20px;color:#111">Karl&nbsp;&nbsp;&nbsp;Jaspersallee</div>
<div class="cell" style="left:379px;top:382px;width:145px;height:28px;line-height:34px;padding-left:3px;font-size:20px;color:#111">789262046</div>
<div class="cell" style="left:525px;top:382px;width:485px;height:28px;line-height:34px;padding-left:3px;font-size:20px;color:#6a8dc4">orange@unknow.ch</div>
<div class="cell" style="left:1011px;top:382px;width:151px;height:28px;line-height:34px;padding-left:3px;font-size:20px;color:#6a8dc4">unknow.ch</div>
<div class="cell" style="left:1163px;top:382px;width:272px;height:28px;line-height:34px;padding-left:3px;font-size:20px;color:#111">1.1.1931</div>
<div class="a" style="left:49px;top:410px;width:1386px;height:28px;background:#dce6f1"></div>
<div class="cell" style="left:50px;top:410px;width:197px;height:28px;line-height:34px;padding-left:3px;font-size:20px;color:#111">Susanne Hahin</div>
<div class="cell" style="left:248px;top:410px;width:130px;height:28px;line-height:34px;padding-left:3px;font-size:20px;color:#111">Seestrasse&nbsp;&nbsp;&nbsp;316</div>
<div class="cell" style="left:379px;top:410px;width:145px;height:28px;line-height:34px;padding-left:3px;font-size:20px;color:#111">787649975</div>
<div class="cell" style="left:525px;top:410px;width:485px;height:28px;line-height:34px;padding-left:3px;font-size:20px;color:#6a8dc4">tekla.hahin@gmail.com</div>
<div class="cell" style="left:1011px;top:410px;width:151px;height:28px;line-height:34px;padding-left:3px;font-size:20px;color:#6a8dc4">gmail.com</div>
<div class="cell" style="left:1163px;top:410px;width:272px;height:28px;line-height:34px;padding-left:3px;font-size:20px;color:#111">1.1.1933</div>
<div class="a" style="left:49px;top:438px;width:1386px;height:28px;background:#b8cce4"></div>
<div class="cell" style="left:50px;top:438px;width:197px;height:28px;line-height:34px;padding-left:3px;font-size:20px;color:#111">Heidi B�uchet-Gunschen</div>
<div class="cell" style="left:248px;top:438px;width:130px;height:28px;line-height:34px;padding-left:3px;font-size:20px;color:#111">Unterer&nbsp;&nbsp;&nbsp;Rheinweg</div>
<div class="cell" style="left:379px;top:438px;width:145px;height:28px;line-height:34px;padding-left:3px;font-size:20px;color:#111">787734461</div>
<div class="cell" style="left:525px;top:438px;width:485px;height:28px;line-height:34px;padding-left:3px;font-size:20px;color:#6a8dc4">martinavenanzoni@gmail.com</div>
<div class="cell" style="left:1011px;top:438px;width:151px;height:28px;line-height:34px;padding-left:3px;font-size:20px;color:#6a8dc4">gmail.com</div>
<div class="cell" style="left:1163px;top:438px;width:272px;height:28px;line-height:34px;padding-left:3px;font-size:20px;color:#111">1.1.1936</div>
<div class="a" style="left:49px;top:466px;width:1386px;height:28px;background:#dce6f1"></div>
<div class="cell" style="left:50px;top:466px;width:197px;height:28px;line-height:34px;padding-left:3px;font-size:20px;color:#111">Lancing Doumbia</div>
<div class="cell" style="left:248px;top:466px;width:130px;height:28px;line-height:34px;padding-left:3px;font-size:20px;color:#111">Sonnenhof&nbsp;&nbsp;&nbsp;9&nbsp;&nbsp;&nbsp;,</div>
<div class="cell" style="left:379px;top:466px;width:145px;height:28px;line-height:34px;padding-left:3px;font-size:20px;color:#111">787798181</div>
<div class="cell" style="left:525px;top:466px;width:485px;height:28px;line-height:34px;padding-left:3px;font-size:20px;color:#6a8dc4">aslihanbesili@hotmail.com</div>
<div class="cell" style="left:1011px;top:466px;width:151px;height:28px;line-height:34px;padding-left:3px;font-size:20px;color:#6a8dc4">hotmail.com</div>
<div class="cell" style="left:1163px;top:466px;width:272px;height:28px;line-height:34px;padding-left:3px;font-size:20px;color:#111">1.1.1941</div>
<div class="a" style="left:49px;top:494px;width:1386px;height:28px;background:#b8cce4"></div>
<div class="cell" style="left:50px;top:494px;width:197px;height:28px;line-height:34px;padding-left:3px;font-size:20px;color:#111">Milan Heribert</div>
<div class="cell" style="left:248px;top:494px;width:130px;height:28px;line-height:34px;padding-left:3px;font-size:20px;color:#111">Seftigenstrasse</div>
<div class="cell" style="left:379px;top:494px;width:145px;height:28px;line-height:34px;padding-left:3px;font-size:20px;color:#111">789277677</div>
<div class="cell" style="left:525px;top:494px;width:485px;height:28px;line-height:34px;padding-left:3px;font-size:20px;color:#6a8dc4">trtl41@bluewin.ch</div>
<div class="cell" style="left:1011px;top:494px;width:151px;height:28px;line-height:34px;padding-left:3px;font-size:20px;color:#6a8dc4">bluewin.ch</div>
<div class="cell" style="left:1163px;top:494px;width:272px;height:28px;line-height:34px;padding-left:3px;font-size:20px;color:#111">1.1.1942</div>
<div class="a" style="left:49px;top:522px;width:1386px;height:28px;background:#dce6f1"></div>
<div class="cell" style="left:50px;top:522px;width:197px;height:28px;line-height:34px;padding-left:3px;font-size:20px;color:#111">Alfonso Braiotta</div>
<div class="cell" style="left:248px;top:522px;width:130px;height:28px;line-height:34px;padding-left:3px;font-size:20px;color:#111">Wolhausenstrasse</div>
<div class="cell" style="left:379px;top:522px;width:145px;height:28px;line-height:34px;padding-left:3px;font-size:20px;color:#111">788722913</div>
<div class="cell" style="left:525px;top:522px;width:485px;height:28px;line-height:34px;padding-left:3px;font-size:20px;color:#6a8dc4">gut@gmx.ch</div>
<div class="cell" style="left:1011px;top:522px;width:151px;height:28px;line-height:34px;padding-left:3px;font-size:20px;color:#6a8dc4">gmx.ch</div>
<div class="cell" style="left:1163px;top:522px;width:272px;height:28px;line-height:34px;padding-left:3px;font-size:20px;color:#111">1.1.1942</div>
<div class="a" style="left:49px;top:550px;width:1386px;height:28px;background:#b8cce4"></div>
<div class="cell" style="left:50px;top:550px;width:197px;height:28px;line-height:34px;padding-left:3px;font-size:20px;color:#111">Walter Hans</div>
<div class="cell" style="left:248px;top:550px;width:130px;height:28px;line-height:34px;padding-left:3px;font-size:20px;color:#111">Pflugstrasse&nbsp;&nbsp;&nbsp;18</div>
<div class="cell" style="left:379px;top:550px;width:145px;height:28px;line-height:34px;padding-left:3px;font-size:20px;color:#111">787748445</div>
<div class="cell" style="left:525px;top:550px;width:485px;height:28px;line-height:34px;padding-left:3px;font-size:20px;color:#6a8dc4">miserez70@gmail.com</div>
<div class="cell" style="left:1011px;top:550px;width:151px;height:28px;line-height:34px;padding-left:3px;font-size:20px;color:#6a8dc4">gmail.com</div>
<div class="cell" style="left:1163px;top:550px;width:272px;height:28px;line-height:34px;padding-left:3px;font-size:20px;color:#111">1.1.1943</div>
<div class="a" style="left:49px;top:578px;width:1386px;height:28px;background:#dce6f1"></div>
<div class="cell" style="left:50px;top:578px;width:197px;height:28px;line-height:34px;padding-left:3px;font-size:20px;color:#111">Geoffrey Nicholas</div>
<div class="cell" style="left:248px;top:578px;width:130px;height:28px;line-height:34px;padding-left:3px;font-size:20px;color:#111">Nufenenstrasse</div>
<div class="cell" style="left:379px;top:578px;width:145px;height:28px;line-height:34px;padding-left:3px;font-size:20px;color:#111">787797835</div>
<div class="cell" style="left:525px;top:578px;width:485px;height:28px;line-height:34px;padding-left:3px;font-size:20px;color:#6a8dc4">gnicholas@vtxmail.ch</div>
<div class="cell" style="left:1011px;top:578px;width:151px;height:28px;line-height:34px;padding-left:3px;font-size:20px;color:#6a8dc4">vtxmail.ch</div>
<div class="cell" style="left:1163px;top:578px;width:272px;height:28px;line-height:34px;padding-left:3px;font-size:20px;color:#111">1.1.1944</div>
<div class="a" style="left:49px;top:606px;width:1386px;height:28px;background:#b8cce4"></div>
<div class="cell" style="left:50px;top:606px;width:197px;height:28px;line-height:34px;padding-left:3px;font-size:20px;color:#111">Eliane Eichenberger</div>
<div class="cell" style="left:248px;top:606px;width:130px;height:28px;line-height:34px;padding-left:3px;font-size:20px;color:#111">Breitenackerstrasse</div>
<div class="cell" style="left:379px;top:606px;width:145px;height:28px;line-height:34px;padding-left:3px;font-size:20px;color:#111">787780878</div>
<div class="cell" style="left:525px;top:606px;width:485px;height:28px;line-height:34px;padding-left:3px;font-size:20px;color:#6a8dc4">Hre5415@hispeed.ch</div>
<div class="cell" style="left:1011px;top:606px;width:151px;height:28px;line-height:34px;padding-left:3px;font-size:20px;color:#6a8dc4">hispeed.ch</div>
<div class="cell" style="left:1163px;top:606px;width:272px;height:28px;line-height:34px;padding-left:3px;font-size:20px;color:#111">1.1.1944</div>
<div class="a" style="left:49px;top:634px;width:1386px;height:28px;background:#dce6f1"></div>
<div class="cell" style="left:50px;top:634px;width:197px;height:28px;line-height:34px;padding-left:3px;font-size:20px;color:#111">Ezzat Damawandi</div>
<div class="cell" style="left:248px;top:634px;width:130px;height:28px;line-height:34px;padding-left:3px;font-size:20px;color:#111">Dersbachstrasse</div>
<div class="cell" style="left:379px;top:634px;width:145px;height:28px;line-height:34px;padding-left:3px;font-size:20px;color:#111">787700730</div>
<div class="cell" style="left:525px;top:634px;width:485px;height:28px;line-height:34px;padding-left:3px;font-size:20px;color:#6a8dc4">neidekempf@hotmail.com</div>
<div class="cell" style="left:1011px;top:634px;width:151px;height:28px;line-height:34px;padding-left:3px;font-size:20px;color:#6a8dc4">hotmail.com</div>
<div class="cell" style="left:1163px;top:634px;width:272px;height:28px;line-height:34px;padding-left:3px;font-size:20px;color:#111">1.1.1945</div>
<div class="a" style="left:49px;top:662px;width:1386px;height:28px;background:#b8cce4"></div>
<div class="cell" style="left:50px;top:662px;width:197px;height:28px;line-height:34px;padding-left:3px;font-size:20px;color:#111">Silvan Vogler</div>
<div class="cell" style="left:248px;top:662px;width:130px;height:28px;line-height:34px;padding-left:3px;font-size:20px;color:#111">B�dlistrasse&nbsp;&nbsp;&nbsp;6</div>
<div class="cell" style="left:379px;top:662px;width:145px;height:28px;line-height:34px;padding-left:3px;font-size:20px;color:#111">789252022</div>
<div class="cell" style="left:525px;top:662px;width:485px;height:28px;line-height:34px;padding-left:3px;font-size:20px;color:#6a8dc4">jeanninezinsli@bluewin.ch</div>
<div class="cell" style="left:1011px;top:662px;width:151px;height:28px;line-height:34px;padding-left:3px;font-size:20px;color:#6a8dc4">bluewin.ch</div>
<div class="cell" style="left:1163px;top:662px;width:272px;height:28px;line-height:34px;padding-left:3px;font-size:20px;color:#111">1.1.1945</div>
<div class="a" style="left:49px;top:690px;width:1386px;height:28px;background:#dce6f1"></div>
<div class="cell" style="left:50px;top:690px;width:197px;height:28px;line-height:34px;padding-left:3px;font-size:20px;color:#111">Felix Spicher</div>
<div class="cell" style="left:248px;top:690px;width:130px;height:28px;line-height:34px;padding-left:3px;font-size:20px;color:#111">Stockistrasse&nbsp;&nbsp;&nbsp;7</div>
<div class="cell" style="left:379px;top:690px;width:145px;height:28px;line-height:34px;padding-left:3px;font-size:20px;color:#111">788117329</div>
<div class="cell" style="left:525px;top:690px;width:485px;height:28px;line-height:34px;padding-left:3px;font-size:20px;color:#6a8dc4">musigfelix@yahoo.de</div>
<div class="cell" style="left:1011px;top:690px;width:151px;height:28px;line-height:34px;padding-left:3px;font-size:20px;color:#6a8dc4">yahoo.de</div>
<div class="cell" style="left:1163px;top:690px;width:272px;height:28px;line-height:34px;padding-left:3px;font-size:20px;color:#111">1.1.1948</div>
<div class="a" style="left:49px;top:718px;width:1386px;height:28px;background:#b8cce4"></div>
<div class="cell" style="left:50px;top:718px;width:197px;height:28px;line-height:34px;padding-left:3px;font-size:20px;color:#111">Serfinaz Terlemez</div>
<div class="cell" style="left:248px;top:718px;width:130px;height:28px;line-height:34px;padding-left:3px;font-size:20px;color:#111">Neugutstrasse&nbsp;&nbsp;&nbsp;1</div>
<div class="cell" style="left:379px;top:718px;width:145px;height:28px;line-height:34px;padding-left:3px;font-size:20px;color:#111">786896887</div>
<div class="cell" style="left:525px;top:718px;width:485px;height:28px;line-height:34px;padding-left:3px;font-size:20px;color:#6a8dc4">z.yuece@hotmail.com</div>
<div class="cell" style="left:1011px;top:718px;width:151px;height:28px;line-height:34px;padding-left:3px;font-size:20px;color:#6a8dc4">hotmail.com</div>
<div class="cell" style="left:1163px;top:718px;width:272px;height:28px;line-height:34px;padding-left:3px;font-size:20px;color:#111">1.1.1949</div>
<div class="a" style="left:49px;top:746px;width:1386px;height:28px;background:#dce6f1"></div>
<div class="cell" style="left:50px;top:746px;width:197px;height:28px;line-height:34px;padding-left:3px;font-size:20px;color:#111">Gholam Sachi</div>
<div class="cell" style="left:248px;top:746px;width:130px;height:28px;line-height:34px;padding-left:3px;font-size:20px;color:#111">Pappelweg&nbsp;&nbsp;&nbsp;17</div>
<div class="cell" style="left:379px;top:746px;width:145px;height:28px;line-height:34px;padding-left:3px;font-size:20px;color:#111">787647800</div>
<div class="cell" style="left:525px;top:746px;width:485px;height:28px;line-height:34px;padding-left:3px;font-size:20px;color:#6a8dc4">farah19.97@hotmail.com</div>
<div class="cell" style="left:1011px;top:746px;width:151px;height:28px;line-height:34px;padding-left:3px;font-size:20px;color:#6a8dc4">hotmail.com</div>
<div class="cell" style="left:1163px;top:746px;width:272px;height:28px;line-height:34px;padding-left:3px;font-size:20px;color:#111">1.1.1950</div>
<div class="a" style="left:49px;top:774px;width:1386px;height:28px;background:#b8cce4"></div>
<div class="cell" style="left:50px;top:774px;width:197px;height:28px;line-height:34px;padding-left:3px;font-size:20px;color:#111">Neze Gezer</div>
<div class="cell" style="left:248px;top:774px;width:130px;height:28px;line-height:34px;padding-left:3px;font-size:20px;color:#111">Hauptstrasse&nbsp;&nbsp;&nbsp;2</div>
<div class="cell" style="left:379px;top:774px;width:145px;height:28px;line-height:34px;padding-left:3px;font-size:20px;color:#111">787424151</div>
<div class="cell" style="left:525px;top:774px;width:485px;height:28px;line-height:34px;padding-left:3px;font-size:20px;color:#6a8dc4">thomasfiliz@yahoo.com</div>
<div class="cell" style="left:1011px;top:774px;width:151px;height:28px;line-height:34px;padding-left:3px;font-size:20px;color:#6a8dc4">yahoo.com</div>
<div class="cell" style="left:1163px;top:774px;width:272px;height:28px;line-height:34px;padding-left:3px;font-size:20px;color:#111">1.1.1950</div>
<div class="a" style="left:49px;top:802px;width:1386px;height:28px;background:#dce6f1"></div>
<div class="cell" style="left:50px;top:802px;width:197px;height:28px;line-height:34px;padding-left:3px;font-size:20px;color:#111">Memet Vural</div>
<div class="cell" style="left:248px;top:802px;width:130px;height:28px;line-height:34px;padding-left:3px;font-size:20px;color:#111">M�hledorfstrasse</div>
<div class="cell" style="left:379px;top:802px;width:145px;height:28px;line-height:34px;padding-left:3px;font-size:20px;color:#111">787162888</div>
<div class="cell" style="left:525px;top:802px;width:485px;height:28px;line-height:34px;padding-left:3px;font-size:20px;color:#6a8dc4">mehmet.vural21@hotmail.com</div>
<div class="cell" style="left:1011px;top:802px;width:151px;height:28px;line-height:34px;padding-left:3px;font-size:20px;color:#6a8dc4">hotmail.com</div>
<div class="cell" style="left:1163px;top:802px;width:272px;height:28px;line-height:34px;padding-left:3px;font-size:20px;color:#111">1.1.1951</div>
<div class="a" style="left:49px;top:830px;width:1386px;height:28px;background:#b8cce4"></div>
<div class="cell" style="left:50px;top:830px;width:197px;height:28px;line-height:34px;padding-left:3px;font-size:20px;color:#111">Marianne Gottier</div>
<div class="cell" style="left:248px;top:830px;width:130px;height:28px;line-height:34px;padding-left:3px;font-size:20px;color:#111">Huebwiesenstrasse</div>
<div class="cell" style="left:379px;top:830px;width:145px;height:28px;line-height:34px;padding-left:3px;font-size:20px;color:#111">786156244</div>
<div class="cell" style="left:525px;top:830px;width:485px;height:28px;line-height:34px;padding-left:3px;font-size:20px;color:#6a8dc4">hulya__reyhan@hotmail.com</div>
<div class="cell" style="left:1011px;top:830px;width:151px;height:28px;line-height:34px;padding-left:3px;font-size:20px;color:#6a8dc4">hotmail.com</div>
<div class="cell" style="left:1163px;top:830px;width:272px;height:28px;line-height:34px;padding-left:3px;font-size:20px;color:#111">1.1.1951</div>
<div class="a" style="left:49px;top:858px;width:1386px;height:28px;background:#dce6f1"></div>
<div class="cell" style="left:50px;top:858px;width:197px;height:28px;line-height:34px;padding-left:3px;font-size:20px;color:#111">Giuseppe Morici</div>
<div class="cell" style="left:248px;top:858px;width:130px;height:28px;line-height:34px;padding-left:3px;font-size:20px;color:#111">Via&nbsp;&nbsp;&nbsp;Cerinasca</div>
<div class="cell" style="left:379px;top:858px;width:145px;height:28px;line-height:34px;padding-left:3px;font-size:20px;color:#111">786745243</div>
<div class="cell" style="left:525px;top:858px;width:485px;height:28px;line-height:34px;padding-left:3px;font-size:20px;color:#6a8dc4">estetica.orchidea@live.it</div>
<div class="cell" style="left:1011px;top:858px;width:151px;height:28px;line-height:34px;padding-left:3px;font-size:20px;color:#6a8dc4">live.it</div>
<div class="cell" style="left:1163px;top:858px;width:272px;height:28px;line-height:34px;padding-left:3px;font-size:20px;color:#111">1.1.1951</div>
<div class="a" style="left:49px;top:886px;width:1386px;height:28px;background:#b8cce4"></div>
<div class="cell" style="left:50px;top:886px;width:197px;height:28px;line-height:34px;padding-left:3px;font-size:20px;color:#111">Rodica Greppi</div>
<div class="cell" style="left:248px;top:886px;width:130px;height:28px;line-height:34px;padding-left:3px;font-size:20px;color:#111">Via&nbsp;&nbsp;&nbsp;Bartolomeo</div>
<div class="cell" style="left:379px;top:886px;width:145px;height:28px;line-height:34px;padding-left:3px;font-size:20px;color:#111">787737118</div>
<div class="cell" style="left:525px;top:886px;width:485px;height:28px;line-height:34px;padding-left:3px;font-size:20px;color:#6a8dc4">rodicavernelia@gmail.com</div>
<div class="cell" style="left:1011px;top:886px;width:151px;height:28px;line-height:34px;padding-left:3px;font-size:20px;color:#6a8dc4">gmail.com</div>
<div class="cell" style="left:1163px;top:886px;width:272px;height:28px;line-height:34px;padding-left:3px;font-size:20px;color:#111">1.1.1952</div>
<div class="a" style="left:49px;top:914px;width:1386px;height:28px;background:#dce6f1"></div>
<div class="cell" style="left:50px;top:914px;width:197px;height:28px;line-height:34px;padding-left:3px;font-size:20px;color:#111">Hans-Dieter-Gottlieb Kaiser</div>
<div class="cell" style="left:248px;top:914px;width:130px;height:28px;line-height:34px;padding-left:3px;font-size:20px;color:#111">Engeriedweg&nbsp;&nbsp;&nbsp;2</div>
<div class="cell" style="left:379px;top:914px;width:145px;height:28px;line-height:34px;padding-left:3px;font-size:20px;color:#111">786538785</div>
<div class="cell" style="left:525px;top:914px;width:485px;height:28px;line-height:34px;padding-left:3px;font-size:20px;color:#6a8dc4">dieterkaiser@hispeed.ch</div>
<div class="cell" style="left:1011px;top:914px;width:151px;height:28px;line-height:34px;padding-left:3px;font-size:20px;color:#6a8dc4">hispeed.ch</div>
<div class="cell" style="left:1163px;top:914px;width:272px;height:28px;line-height:34px;padding-left:3px;font-size:20px;color:#111">1.1.1952</div>
<div class="a" style="left:49px;top:942px;width:1386px;height:28px;background:#b8cce4"></div>
<div class="cell" style="left:50px;top:942px;width:197px;height:28px;line-height:34px;padding-left:3px;font-size:20px;color:#111">Besime Sayilir</div>
<div class="cell" style="left:248px;top:942px;width:130px;height:28px;line-height:34px;padding-left:3px;font-size:20px;color:#111">Neumattstrasse</div>
<div class="cell" style="left:379px;top:942px;width:145px;height:28px;line-height:34px;padding-left:3px;font-size:20px;color:#111">787729575</div>
<div class="cell" style="left:525px;top:942px;width:485px;height:28px;line-height:34px;padding-left:3px;font-size:20px;color:#6a8dc4">besimesayilir@hotmail.com</div>
<div class="cell" style="left:1011px;top:942px;width:151px;height:28px;line-height:34px;padding-left:3px;font-size:20px;color:#6a8dc4">hotmail.com</div>
<div class="cell" style="left:1163px;top:942px;width:272px;height:28px;line-height:34px;padding-left:3px;font-size:20px;color:#111">1.1.1953</div>
<div class="a" style="left:49px;top:970px;width:1386px;height:28px;background:#dce6f1"></div>
<div class="cell" style="left:50px;top:970px;width:197px;height:28px;line-height:34px;padding-left:3px;font-size:20px;color:#111">Evelyne Rosenfeld</div>
<div class="cell" style="left:248px;top:970px;width:130px;height:28px;line-height:34px;padding-left:3px;font-size:20px;color:#111">Bellariastrasse</div>
<div class="cell" style="left:379px;top:970px;width:145px;height:28px;line-height:34px;padding-left:3px;font-size:20px;color:#111">787763484</div>
<div class="cell" style="left:525px;top:970px;width:485px;height:28px;line-height:34px;padding-left:3px;font-size:20px;color:#6a8dc4">evelynerosenfeld@hotmail.com</div>
<div class="cell" style="left:1011px;top:970px;width:151px;height:28px;line-height:34px;padding-left:3px;font-size:20px;color:#6a8dc4">hotmail.com</div>
<div class="cell" style="left:1163px;top:970px;width:272px;height:28px;line-height:34px;padding-left:3px;font-size:20px;color:#111">1.1.1953</div>
<div class="a" style="left:49px;top:998px;width:1386px;height:7px;background:#b8cce4"></div>
<div class="a" style="left:49px;top:354px;width:1386px;height:1px;background:repeating-linear-gradient(90deg,#111 0 1px,transparent 1px 2px)"></div>
<div class="a" style="left:49px;top:382px;width:1386px;height:1px;background:repeating-linear-gradient(90deg,#111 0 1px,transparent 1px 2px)"></div>
<div class="a" style="left:49px;top:410px;width:1386px;height:1px;background:repeating-linear-gradient(90deg,#111 0 1px,transparent 1px 2px)"></div>
<div class="a" style="left:49px;top:438px;width:1386px;height:1px;background:repeating-linear-gradient(90deg,#111 0 1px,transparent 1px 2px)"></div>
<div class="a" style="left:49px;top:466px;width:1386px;height:1px;background:repeating-linear-gradient(90deg,#111 0 1px,transparent 1px 2px)"></div>
<div class="a" style="left:49px;top:494px;width:1386px;height:1px;background:repeating-linear-gradient(90deg,#111 0 1px,transparent 1px 2px)"></div>
<div class="a" style="left:49px;top:522px;width:1386px;height:1px;background:repeating-linear-gradient(90deg,#111 0 1px,transparent 1px 2px)"></div>
<div class="a" style="left:49px;top:550px;width:1386px;height:1px;background:repeating-linear-gradient(90deg,#111 0 1px,transparent 1px 2px)"></div>
<div class="a" style="left:49px;top:578px;width:1386px;height:1px;background:repeating-linear-gradient(90deg,#111 0 1px,transparent 1px 2px)"></div>
<div class="a" style="left:49px;top:606px;width:1386px;height:1px;background:repeating-linear-gradient(90deg,#111 0 1px,transparent 1px 2px)"></div>
<div class="a" style="left:49px;top:634px;width:1386px;height:1px;background:repeating-linear-gradient(90deg,#111 0 1px,transparent 1px 2px)"></div>
<div class="a" style="left:49px;top:662px;width:1386px;height:1px;background:repeating-linear-gradient(90deg,#111 0 1px,transparent 1px 2px)"></div>
<div class="a" style="left:49px;top:690px;width:1386px;height:1px;background:repeating-linear-gradient(90deg,#111 0 1px,transparent 1px 2px)"></div>
<div class="a" style="left:49px;top:718px;width:1386px;height:1px;background:repeating-linear-gradient(90deg,#111 0 1px,transparent 1px 2px)"></div>
<div class="a" style="left:49px;top:746px;width:1386px;height:1px;background:repeating-linear-gradient(90deg,#111 0 1px,transparent 1px 2px)"></div>
<div class="a" style="left:49px;top:774px;width:1386px;height:1px;background:repeating-linear-gradient(90deg,#111 0 1px,transparent 1px 2px)"></div>
<div class="a" style="left:49px;top:802px;width:1386px;height:1px;background:repeating-linear-gradient(90deg,#111 0 1px,transparent 1px 2px)"></div>
<div class="a" style="left:49px;top:830px;width:1386px;height:1px;background:repeating-linear-gradient(90deg,#111 0 1px,transparent 1px 2px)"></div>
<div class="a" style="left:49px;top:858px;width:1386px;height:1px;background:repeating-linear-gradient(90deg,#111 0 1px,transparent 1px 2px)"></div>
<div class="a" style="left:49px;top:886px;width:1386px;height:1px;background:repeating-linear-gradient(90deg,#111 0 1px,transparent 1px 2px)"></div>
<div class="a" style="left:49px;top:914px;width:1386px;height:1px;background:repeating-linear-gradient(90deg,#111 0 1px,transparent 1px 2px)"></div>
<div class="a" style="left:49px;top:942px;width:1386px;height:1px;background:repeating-linear-gradient(90deg,#111 0 1px,transparent 1px 2px)"></div>
<div class="a" style="left:49px;top:970px;width:1386px;height:1px;background:repeating-linear-gradient(90deg,#111 0 1px,transparent 1px 2px)"></div>
<div class="a" style="left:49px;top:998px;width:1386px;height:1px;background:repeating-linear-gradient(90deg,#111 0 1px,transparent 1px 2px)"></div>
<div class="a" style="left:247px;top:300px;width:1px;height:705px;background:repeating-linear-gradient(180deg,#111 0 1px,transparent 1px 2px)"></div>
<div class="a" style="left:378px;top:300px;width:1px;height:705px;background:repeating-linear-gradient(180deg,#111 0 1px,transparent 1px 2px)"></div>
<div class="a" style="left:524px;top:300px;width:1px;height:705px;background:repeating-linear-gradient(180deg,#111 0 1px,transparent 1px 2px)"></div>
<div class="a" style="left:1010px;top:300px;width:1px;height:705px;background:repeating-linear-gradient(180deg,#111 0 1px,transparent 1px 2px)"></div>
<div class="a" style="left:1162px;top:300px;width:1px;height:705px;background:repeating-linear-gradient(180deg,#111 0 1px,transparent 1px 2px)"></div>
<div class="a" style="left:1435px;top:300px;width:1px;height:705px;background:repeating-linear-gradient(180deg,#111 0 1px,transparent 1px 2px)"></div>
<div class="a" style="left:49px;top:297px;width:1386px;height:29px;background:#849b47"></div>
<div class="a" style="left:49px;top:297px;width:198px;height:29px;background:#8fb655"></div>
<div class="a" style="left:1435px;top:297px;width:392px;height:29px;background:#d9d9d9"></div>
<div class="cell" style="left:50px;top:297px;width:197px;height:29px;line-height:27px;padding-left:4px;font-size:29px;font-weight:bold;letter-spacing:1px;color:#f4f7d2">Nom Prénom</div>
<div class="a" style="left:224px;top:304px;width:22px;height:21px;background:#fff"></div>
<svg style="left:231px;top:313px" width="10" height="5" viewBox="0 0 10 5"><path d="M0 0H10L5 5Z" fill="#38a37a"/></svg>
<div class="cell" style="left:248px;top:297px;width:130px;height:29px;line-height:27px;padding-left:4px;font-size:29px;font-weight:bold;letter-spacing:1px;color:#e6e8c6">Adresse</div>
<div class="a" style="left:355px;top:304px;width:22px;height:21px;background:#fff"></div>
<svg style="left:362px;top:313px" width="10" height="5" viewBox="0 0 10 5"><path d="M0 0H10L5 5Z" fill="#38a37a"/></svg>
<div class="cell" style="left:379px;top:297px;width:145px;height:29px;line-height:27px;padding-left:4px;font-size:29px;font-weight:bold;letter-spacing:1px;color:#e6e8c6">Numero</div>
<div class="a" style="left:501px;top:304px;width:22px;height:21px;background:#fff"></div>
<svg style="left:508px;top:313px" width="10" height="5" viewBox="0 0 10 5"><path d="M0 0H10L5 5Z" fill="#38a37a"/></svg>
<div class="cell" style="left:525px;top:297px;width:485px;height:29px;line-height:27px;padding-left:4px;font-size:29px;font-weight:bold;letter-spacing:1px;color:#e6e8c6">Email</div>
<div class="a" style="left:987px;top:304px;width:22px;height:21px;background:#fff"></div>
<svg style="left:994px;top:313px" width="10" height="5" viewBox="0 0 10 5"><path d="M0 0H10L5 5Z" fill="#38a37a"/></svg>
<div class="cell" style="left:1011px;top:297px;width:151px;height:29px;line-height:27px;padding-left:4px;font-size:29px;font-weight:bold;letter-spacing:1px;color:#e6e8c6">Domain</div>
<div class="a" style="left:1139px;top:304px;width:22px;height:21px;background:#fff"></div>
<svg style="left:1146px;top:313px" width="10" height="5" viewBox="0 0 10 5"><path d="M0 0H10L5 5Z" fill="#38a37a"/></svg>
<div class="cell" style="left:1163px;top:297px;width:272px;height:29px;line-height:27px;padding-left:4px;font-size:29px;font-weight:bold;letter-spacing:0.6px;color:#e6e8c6">Date de Naissance</div>
<div class="a" style="left:1412px;top:304px;width:22px;height:21px;background:#fff"></div>
<svg style="left:1419px;top:313px" width="10" height="5" viewBox="0 0 10 5"><path d="M0 0H10L5 5Z" fill="#38a37a"/></svg>
<div class="a" style="left:247px;top:300px;width:1px;height:25px;background:repeating-linear-gradient(180deg,#222 0 1px,transparent 1px 2px)"></div>
<div class="a" style="left:378px;top:300px;width:1px;height:25px;background:repeating-linear-gradient(180deg,#222 0 1px,transparent 1px 2px)"></div>
<div class="a" style="left:524px;top:300px;width:1px;height:25px;background:repeating-linear-gradient(180deg,#222 0 1px,transparent 1px 2px)"></div>
<div class="a" style="left:1010px;top:300px;width:1px;height:25px;background:repeating-linear-gradient(180deg,#222 0 1px,transparent 1px 2px)"></div>
<div class="a" style="left:1162px;top:300px;width:1px;height:25px;background:repeating-linear-gradient(180deg,#222 0 1px,transparent 1px 2px)"></div>
<div class="a" style="left:1435px;top:300px;width:1px;height:25px;background:repeating-linear-gradient(180deg,#222 0 1px,transparent 1px 2px)"></div>
<div class="a" style="left:1587px;top:297px;width:1px;height:29px;background:#bdbdbd"></div>
<div class="a" style="left:1739px;top:297px;width:1px;height:29px;background:#bdbdbd"></div>
<div class="a" style="left:0;top:325px;width:49px;height:1px;background:#3aa776"></div>
<div class="a" style="left:49px;top:296px;width:1778px;height:1px;background:#c3eadb"></div>
<div class="a" style="left:49px;top:297px;width:1778px;height:3px;background:#3aa575"></div>
<div class="a" style="left:49px;top:300px;width:1778px;height:1px;background:#bfe6cf"></div>
<div class="a" style="left:49px;top:324px;width:1778px;height:1px;background:#bfe6cf"></div>
<div class="a" style="left:49px;top:325px;width:1778px;height:3px;background:#3aa575"></div>
<div class="a" style="left:48px;top:297px;width:2px;height:31px;background:#3aa575"></div>
<div class="a" style="left:50px;top:324px;width:6px;height:6px;background:#3aa575;border:1px solid #fff"></div>
<div class="a" style="left:1853px;top:206px;width:67px;height:832px;background:#f4f5f7;border-left:1px solid #e3e5e9"></div>
<svg style="left:1870px;top:220px" width="32" height="8" viewBox="0 0 32 8"><path d="M1 1.5H31M1 6H31" stroke="#c2c5cc" stroke-width="1.6" fill="none" stroke-linecap="round" stroke-linejoin="round" stroke-width="1.3"/></svg>
<svg style="left:1875px;top:259px" width="26" height="24" viewBox="0 0 26 24"><path d="M2 1H4V3H2Z M2 6H4V22H2Z M8 1.5H22V4H8Z M9 20H20V9 M16.5 12L20 8.5L23.5 12 M9 20L12 17M9 20L12 23" stroke="#c2c5cc" stroke-width="1.6" fill="none" stroke-linecap="round" stroke-linejoin="round" stroke-width="1.3"/></svg>
<svg style="left:1877px;top:312px" width="22" height="26" viewBox="0 0 22 26"><path d="M2 2V22L7 17L10.5 24.5L14 23L10.5 15.5H18Z" stroke="#3d4049" stroke-width="1.6" fill="none" stroke-linecap="round" stroke-linejoin="round"/></svg>
<svg style="left:1873px;top:369px" width="28" height="22" viewBox="0 0 28 22"><circle cx="5" cy="4" r="3" stroke="#3d4049" stroke-width="1.6" fill="none" stroke-linecap="round" stroke-linejoin="round" stroke-width="1.3"/><path d="M8 4H26 M2 17H18 M24 17H26" stroke="#3d4049" stroke-width="1.6" fill="none" stroke-linecap="round" stroke-linejoin="round" stroke-width="1.3"/><circle cx="21" cy="17" r="3" stroke="#3d4049" stroke-width="1.6" fill="none" stroke-linecap="round" stroke-linejoin="round" stroke-width="1.3"/></svg>
<svg style="left:1872px;top:419px" width="28" height="28" viewBox="0 0 28 28"><path d="M4 13A10 10 0 1 0 7 6 M3 8L4 13L8.5 11 M14 8V14H19" stroke="#3d4049" stroke-width="1.6" fill="none" stroke-linecap="round" stroke-linejoin="round"/></svg>
<svg style="left:1873px;top:475px" width="26" height="26" viewBox="0 0 26 26"><circle cx="13" cy="13" r="11.2" stroke="#3d4049" stroke-width="1.6" fill="none" stroke-linecap="round" stroke-linejoin="round"/><path d="M9.5 10Q9.5 6.5 13 6.5Q16.5 6.5 16.5 9.5Q16.5 12 13 13.5V15.5" stroke="#3d4049" stroke-width="1.6" fill="none" stroke-linecap="round" stroke-linejoin="round"/><circle cx="13" cy="19" r="1.1" fill="#3d4049"/></svg>
<div class="a" style="left:1856px;top:970px;width:60px;height:1px;background:#e3e5e9"></div>
<svg style="left:1874px;top:1000px" width="24" height="24" viewBox="0 0 24 24"><rect x="1.5" y="1.5" width="8" height="8" rx="2" stroke="#9a9ea8" stroke-width="1.6" fill="none" stroke-linecap="round" stroke-linejoin="round" stroke-width="1.3"/><rect x="13.5" y="1.5" width="8" height="8" rx="2" stroke="#9a9ea8" stroke-width="1.6" fill="none" stroke-linecap="round" stroke-linejoin="round" stroke-width="1.3"/><rect x="1.5" y="13.5" width="8" height="8" rx="2" stroke="#9a9ea8" stroke-width="1.6" fill="none" stroke-linecap="round" stroke-linejoin="round" stroke-width="1.3"/><rect x="13.5" y="13.5" width="8" height="8" rx="2" stroke="#9a9ea8" stroke-width="1.6" fill="none" stroke-linecap="round" stroke-linejoin="round" stroke-width="1.3"/></svg>
<div class="a" style="left:1827px;top:271px;width:26px;height:734px;background:#f4f5f7"></div>
<div class="a" style="left:1831px;top:292px;width:22px;height:713px;background:#e9eaee"></div>
<svg style="left:1834px;top:278px" width="16" height="6" viewBox="0 0 16 6"><path d="M1 1H15M1 5H15" stroke="#c2c5cc" stroke-width="1.6" fill="none" stroke-linecap="round" stroke-linejoin="round" stroke-width="1.2"/></svg>
<svg style="left:1836px;top:301px" width="10" height="6" viewBox="0 0 10 6"><path d="M0 6H10L5 0Z" fill="#8c919b"/></svg>
<div class="a" style="left:1832px;top:324px;width:18px;height:55px;background:#d6d9df;border-radius:9px"></div>
<svg style="left:1836px;top:987px" width="10" height="6" viewBox="0 0 10 6"><path d="M0 0H10L5 6Z" fill="#8c919b"/></svg>
<div class="a" style="left:0;top:1005px;width:1853px;height:33px;background:#f4f5f7"></div>
<svg style="left:22px;top:1012px" width="18" height="20" viewBox="0 0 18 20"><path d="M2 2V18 M14 2L6 10L14 18" stroke="#c2c5cc" stroke-width="1.6" fill="none" stroke-linecap="round" stroke-linejoin="round" stroke-width="1.4"/></svg>
<svg style="left:60px;top:1012px" width="14" height="20" viewBox="0 0 14 20"><path d="M11 2L3 10L11 18" stroke="#c2c5cc" stroke-width="1.6" fill="none" stroke-linecap="round" stroke-linejoin="round" stroke-width="1.4"/></svg>
<svg style="left:99px;top:1012px" width="14" height="20" viewBox="0 0 14 20"><path d="M3 2L11 10L3 18" stroke="#c2c5cc" stroke-width="1.6" fill="none" stroke-linecap="round" stroke-linejoin="round" stroke-width="1.4"/></svg>
<svg style="left:138px;top:1012px" width="18" height="20" viewBox="0 0 18 20"><path d="M15 2V18 M3 2L11 10L3 18" stroke="#c2c5cc" stroke-width="1.6" fill="none" stroke-linecap="round" stroke-linejoin="round" stroke-width="1.4"/></svg>
<div class="a" style="left:178px;top:1005px;width:98px;height:32px;background:#fff"></div>
<div class="a" style="left:276px;top:1005px;width:197px;height:32px;background:#e9eaed"></div>
<div class="t" style="left:203px;top:1016px;font-size:16px;font-weight:bold;color:#2fb179;letter-spacing:-0.2px">Sheet1</div>
<div class="t" style="left:303px;top:1016px;font-size:16px;color:#555;letter-spacing:-0.3px">Sheet2</div>
<div class="t" style="left:401px;top:1016px;font-size:16px;color:#555;letter-spacing:-0.3px">Sheet3</div>
<svg style="left:480px;top:1012px" width="20" height="20" viewBox="0 0 20 20"><path d="M10 1V19M1 10H19" stroke="#3d4049" stroke-width="1.6" fill="none" stroke-linecap="round" stroke-linejoin="round" stroke-width="1.6"/></svg>
<svg style="left:1078px;top:1013px" width="6" height="16" viewBox="0 0 6 16"><path d="M1 1V15M5 1V15" stroke="#c2c5cc" stroke-width="1.6" fill="none" stroke-linecap="round" stroke-linejoin="round" stroke-width="1.2"/></svg>
<div class="a" style="left:1092px;top:1011px;width:713px;height:20px;background:#e9eaee;border-radius:2px"></div>
<svg style="left:1102px;top:1016px" width="6" height="10" viewBox="0 0 6 10"><path d="M6 0V10L0 5Z" fill="#8c919b"/></svg>
<div class="a" style="left:1123px;top:1012px;width:580px;height:18px;background:#d6d9df;border-radius:9px"></div>
<svg style="left:1788px;top:1016px" width="6" height="10" viewBox="0 0 6 10"><path d="M0 0V10L6 5Z" fill="#8c919b"/></svg>
<svg style="left:1812px;top:1013px" width="6" height="16" viewBox="0 0 6 16"><path d="M1 1V15M5 1V15" stroke="#c2c5cc" stroke-width="1.6" fill="none" stroke-linecap="round" stroke-linejoin="round" stroke-width="1.2"/></svg>
<div class="a" style="left:0;top:1038px;width:1920px;height:42px;background:#f4f5f7;border-top:1px solid #e6e8eb"></div>
<svg style="left:17px;top:1047px" width="26" height="26" viewBox="0 0 26 26"><circle cx="7" cy="6" r="4.5" stroke="#3d4049" stroke-width="1.6" fill="none" stroke-linecap="round" stroke-linejoin="round" stroke-width="1.5"/><circle cx="7" cy="6" r="1.6" stroke="#3d4049" stroke-width="1.6" fill="none" stroke-linecap="round" stroke-linejoin="round" stroke-width="1.5"/><path d="M11.5 3H21Q23.5 3 23.5 5.5Q23.5 8 21 8H20V21H3.5V18.5 M3.5 18.5H20 M3.5 24H20V21" stroke="#3d4049" stroke-width="1.6" fill="none" stroke-linecap="round" stroke-linejoin="round" stroke-width="1.5"/></svg>
<div class="t" style="left:75px;top:1053px;font-size:16px;color:#3a3a3a;letter-spacing:-0.3px">Average=0</div>
<div class="t" style="left:160px;top:1053px;font-size:16px;color:#3a3a3a;letter-spacing:-0.3px">Count=6</div>
<div class="t" style="left:230px;top:1053px;font-size:16px;color:#3a3a3a;letter-spacing:-0.3px">Sum=0</div>
<svg style="left:1187px;top:1048px" width="24" height="24" viewBox="0 0 24 24"><path d="M5 3H19V21H5Z M3 5V22H17 M10 9V15H14" stroke="#3d4049" stroke-width="1.6" fill="none" stroke-linecap="round" stroke-linejoin="round" stroke-width="1.4"/></svg>
<svg style="left:1221px;top:1046px" width="28" height="28" viewBox="0 0 28 28"><path d="M11 2.5Q11 1.5 12 1.5H16Q17 1.5 17 2.5V11H25.5Q26.5 11 26.5 12V16Q26.5 17 25.5 17H17V25.5Q17 26.5 16 26.5H12Q11 26.5 11 25.5V17H2.5Q1.5 17 1.5 16V12Q1.5 11 2.5 11H11Z M11 11H17V17H11Z" stroke="#3d4049" stroke-width="1.6" fill="none" stroke-linecap="round" stroke-linejoin="round" stroke-width="1.4"/></svg>
<svg style="left:1251px;top:1057px" width="8" height="5" viewBox="0 0 8 5"><path d="M0 0H8L4 4.5Z" fill="#8a8f99"/></svg>
<div class="a" style="left:1276px;top:1048px;width:1px;height:24px;background:#dcdfe3"></div>
<svg style="left:1295px;top:1047px" width="24" height="26" viewBox="0 0 24 26"><path d="M8 6V3Q8 1.5 9.5 1.5H20Q21.5 1.5 21.5 3V23Q21.5 24.5 20 24.5H9.5Q8 24.5 8 23V19 M1.5 12.5H13M9.5 9L13 12.5L9.5 16 M13.5 21H16" stroke="#3d4049" stroke-width="1.6" fill="none" stroke-linecap="round" stroke-linejoin="round" stroke-width="1.4"/></svg>
<div class="a" style="left:1325px;top:1041px;width:34px;height:36px;background:#dfe2e8;border-radius:3px"></div>
<svg style="left:1329px;top:1048px" width="26" height="24" viewBox="0 0 26 24"><path d="M2 2H24V22H2Z M2 8.5H24M2 15H24 M9.5 2V22M16.5 2V22" stroke="#3d4049" stroke-width="1.6" fill="none" stroke-linecap="round" stroke-linejoin="round" stroke-width="1.5"/></svg>
<svg style="left:1367px;top:1047px" width="24" height="26" viewBox="0 0 24 26"><path d="M2 2H22V24H2Z M6 6H18V20H6Z M12 6V20" stroke="#3d4049" stroke-width="1.6" fill="none" stroke-linecap="round" stroke-linejoin="round" stroke-width="1.5"/></svg>
<svg style="left:1406px;top:1047px" width="26" height="24" viewBox="0 0 26 24"><path d="M2 2H24V22H2Z M2 13H13V2 M8 2V8" stroke="#3d4049" stroke-width="1.6" fill="none" stroke-linecap="round" stroke-linejoin="round" stroke-width="1.5"/></svg>
<svg style="left:1442px;top:1045px" width="30" height="28" viewBox="0 0 30 28"><path d="M2 17Q15 3 28 17Q15 31 2 17Z" stroke="#3d4049" stroke-width="1.6" fill="none" stroke-linecap="round" stroke-linejoin="round" stroke-width="1.5"/><circle cx="15" cy="17" r="4.5" stroke="#3d4049" stroke-width="1.6" fill="none" stroke-linecap="round" stroke-linejoin="round" stroke-width="1.5"/><path d="M15 2V5 M6 4L8 7 M24 4L22 7" stroke="#3d4049" stroke-width="1.6" fill="none" stroke-linecap="round" stroke-linejoin="round" stroke-width="1.4"/></svg>
<svg style="left:1472px;top:1057px" width="8" height="5" viewBox="0 0 8 5"><path d="M0 0H8L4 4.5Z" fill="#8a8f99"/></svg>
<div class="a" style="left:1497px;top:1048px;width:1px;height:24px;background:#dcdfe3"></div>
<div class="t" style="left:1510px;top:1052px;font-size:16px;color:#666;letter-spacing:-0.3px">100%</div>
<svg style="left:1555px;top:1057px" width="8" height="5" viewBox="0 0 8 5"><path d="M0 0H8L4 4.5Z" fill="#8a8f99"/></svg>
<div class="a" style="left:1582px;top:1058px;width:15px;height:3px;background:#333"></div>
<div class="a" style="left:1615px;top:1059px;width:207px;height:1px;background:#a9acb3"></div>
<div class="a" style="left:1705px;top:1049px;width:20px;height:20px;border-radius:50%;background:#fff;border:1.5px solid #4a4e57"></div>
<svg style="left:1838px;top:1051px" width="17" height="17" viewBox="0 0 17 17"><path d="M8.5 0V17M0 8.5H17" stroke="#333" stroke-width="3"/></svg>
<svg style="left:1873px;top:1048px" width="24" height="24" viewBox="0 0 24 24"><path d="M2 2L8 8M2 2H7M2 2V7 M22 2L16 8M22 2H17M22 2V7 M2 22L8 16M2 22H7M2 22V17 M22 22L16 16M22 22H17M22 22V17" stroke="#3d4049" stroke-width="1.6" fill="none" stroke-linecap="round" stroke-linejoin="round" stroke-width="1.5"/></svg>
</body></html>
